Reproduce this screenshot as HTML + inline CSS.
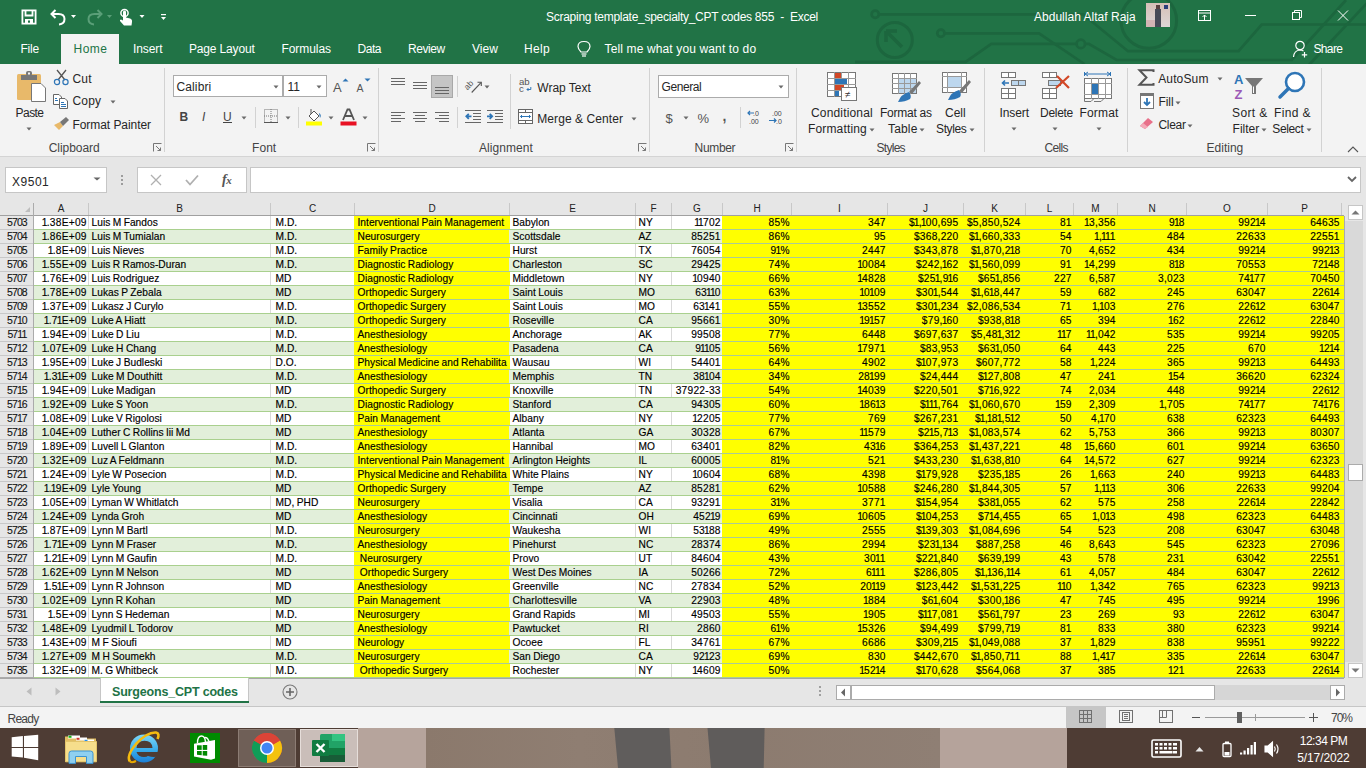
<!DOCTYPE html>
<html><head><meta charset="utf-8"><title>Excel</title>
<style>
html,body{margin:0;padding:0;width:1366px;height:768px;overflow:hidden;background:#fff;}
body{position:relative;font-family:"Liberation Sans", sans-serif;}
.t{position:absolute;white-space:pre;line-height:1;}
.r{position:absolute;}
.s{position:absolute;overflow:visible;}
.n{color:#000;letter-spacing:0.25px;-webkit-text-stroke:0.15px #000;}
.o{margin-left:-1px;letter-spacing:-0.75px;}
</style></head><body>
<div class="r" style="left:0px;top:0px;width:1366px;height:64px;background:#217346;"></div><svg class="s" style="left:0px;top:0px;" width="1366" height="64" viewBox="0 0 1366 64">
<g fill="none" stroke="#1c663e" stroke-width="2.7">
<circle cx="875.2" cy="14.3" r="3.6"/><path d="M878.8 14.3 L1083 14.3 L1128 51.2 L1238.5 51.2 L1261.7 24.5 L1366 24.5"/>
<circle cx="894.8" cy="40" r="17.5" stroke-width="3"/>
<path d="M887 32 L902 47 M886 31 V42 M886 31 H897" stroke-width="3.5"/>
<circle cx="940.9" cy="33.3" r="3.6"/><path d="M944.5 33.3 L1039 33.3 L1084.4 64"/>
<path d="M855 61.9 L965.6 61.9 L991.3 43.9 L1076 43.9"/><circle cx="1080.8" cy="43.9" r="4.2"/><path d="M1085 43.9 L1088.8 43.9 L1116.6 60 L1291.7 60 L1346 0"/>
<circle cx="1148.8" cy="20.5" r="27.8" stroke-width="3"/>
<path d="M1308 66 L1368 2"/>
</g></svg><svg class="s" style="left:20px;top:8px;" width="150" height="20" viewBox="0 0 150 20">
<g fill="none" stroke="#fff" stroke-width="1.8">
<rect x="2.4" y="2.4" width="13.2" height="13.2"/><path d="M5.5 2.5 V7.5 H12.5 V2.5"/>
</g>
<path d="M5 11 H13 V15 H10 V12.5 H8 V15 H5 Z" fill="#fff"/>
<g fill="none" stroke="#fff" stroke-width="2">
<path d="M32.5 6 L38.5 6 Q44.5 6 44.5 11 Q44.5 16 39 16.5" /><path d="M35.5 2 L31.5 6 L35.5 10"/>
</g>
<path d="M51 7 L56 7 L53.5 10 Z" fill="#fff"/>
<g fill="none" stroke="#5a9f78" stroke-width="2">
<path d="M80.5 6 L74.5 6 Q68.5 6 68.5 11 Q68.5 16 74 16.5"/><path d="M77.5 2 L81.5 6 L77.5 10"/>
</g>
<path d="M87 7 L92 7 L89.5 10 Z" fill="#5a9f78"/>
<circle cx="104.5" cy="5" r="3.6" fill="none" stroke="#fff" stroke-width="1.5"/>
<path d="M103 4 Q103 2.5 104.5 2.5 Q106 2.5 106 4 V9.5 L110 10.5 Q112.5 11.5 112 14 L111.5 17.5 H104 L100 13 Q99.5 11.5 101 11.5 L103 12.5 Z" fill="#fff"/>
<path d="M119.5 7 L124.5 7 L122 10 Z" fill="#fff"/>
<rect x="141" y="6" width="5" height="1.2" fill="#fff"/><path d="M141 9 L146 9 L143.5 12 Z" fill="#fff"/>
</svg><div class="t" style="left:546px;top:10.84px;font-size:12px;color:#fff;letter-spacing:-0.273px;">Scraping template_specialty_CPT codes 855  -  Excel</div><div class="t" style="left:1034px;top:10.84px;font-size:12px;color:#fff;letter-spacing:0.016px;">Abdullah Altaf Raja</div><div class="r" style="left:1146px;top:3px;width:24px;height:24px;background:linear-gradient(180deg,#d6bfb6 0%,#d9ccc8 55%,#ddd6d6 100%)"></div><div class="r" style="left:1146px;top:20px;width:9px;height:7px;background:#d4b4b4;"></div><div class="r" style="left:1155px;top:9px;width:6px;height:18px;background:#474a57;"></div><div class="r" style="left:1156px;top:5px;width:4px;height:4px;background:#5a4040;"></div><div class="r" style="left:1164px;top:5px;width:4px;height:4px;background:#2c3f7a;"></div><svg class="s" style="left:1196px;top:8px;" width="160" height="16" viewBox="0 0 160 16">
<g fill="none" stroke="#fff" stroke-width="1">
<rect x="2.5" y="2.5" width="12" height="10"/><line x1="2.5" y1="5" x2="14.5" y2="5"/><path d="M8.5 12 V7 M6.5 9 L8.5 7 L10.5 9"/>
<line x1="49" y1="7.5" x2="60" y2="7.5"/>
<rect x="96.5" y="4.5" width="7" height="7"/><path d="M98.5 4.5 V2.5 H105.5 V9.5 H103.5"/>
<path d="M142 2.5 L152 12.5 M152 2.5 L142 12.5"/>
</g></svg><div class="r" style="left:61px;top:34px;width:58px;height:30px;background:#F3F3F3;"></div><div class="t" style="left:20.5px;top:42.84px;font-size:12px;color:#fff;letter-spacing:-0.248px;">File</div><div class="t" style="left:73.5px;top:42.84px;font-size:12px;color:#217346;letter-spacing:0.495px;">Home</div><div class="t" style="left:133px;top:42.84px;font-size:12px;color:#fff;letter-spacing:-0.083px;">Insert</div><div class="t" style="left:189px;top:42.84px;font-size:12px;color:#fff;letter-spacing:-0.159px;">Page Layout</div><div class="t" style="left:281.5px;top:42.84px;font-size:12px;color:#fff;letter-spacing:-0.074px;">Formulas</div><div class="t" style="left:357.5px;top:42.84px;font-size:12px;color:#fff;letter-spacing:-0.453px;">Data</div><div class="t" style="left:408px;top:42.84px;font-size:12px;color:#fff;letter-spacing:-0.412px;">Review</div><div class="t" style="left:472px;top:42.84px;font-size:12px;color:#fff;letter-spacing:0.001px;">View</div><div class="t" style="left:524px;top:42.84px;font-size:12px;color:#fff;letter-spacing:0.304px;">Help</div><svg class="s" style="left:576px;top:40px;" width="18" height="18" viewBox="0 0 18 18"><g fill="none" stroke="#fff" stroke-width="1.2"><path d="M5 12 Q2 9 2 6.5 Q2 1.5 8 1.5 Q14 1.5 14 6.5 Q14 9 11 12 Z"/><line x1="5.5" y1="14" x2="10.5" y2="14"/><line x1="6" y1="16" x2="10" y2="16"/></g></svg><div class="t" style="left:604.5px;top:42.84px;font-size:12px;color:#fff;letter-spacing:0.135px;">Tell me what you want to do</div><svg class="s" style="left:1292px;top:40px;" width="18" height="18" viewBox="0 0 18 18"><g fill="none" stroke="#fff" stroke-width="1.2"><circle cx="8" cy="5.5" r="4.2"/><path d="M1.5 17 Q2 10.5 8 10 Q10 10 11.5 11"/><path d="M12.5 12 V17.5 M9.8 14.8 H15.2"/></g></svg><div class="t" style="left:1313.5px;top:43.04px;font-size:12px;color:#fff;letter-spacing:-0.658px;">Share</div><div class="r" style="left:0px;top:64px;width:1366px;height:92px;background:#F3F3F3;"></div><div class="r" style="left:0px;top:156px;width:1366px;height:1px;background:#D4D4D4;"></div><div class="r" style="left:164px;top:68px;width:1px;height:84px;background:#D2D2D2;"></div><div class="r" style="left:378px;top:68px;width:1px;height:84px;background:#D2D2D2;"></div><div class="r" style="left:649px;top:68px;width:1px;height:84px;background:#D2D2D2;"></div><div class="r" style="left:796px;top:68px;width:1px;height:84px;background:#D2D2D2;"></div><div class="r" style="left:984px;top:68px;width:1px;height:84px;background:#D2D2D2;"></div><div class="r" style="left:1127px;top:68px;width:1px;height:84px;background:#D2D2D2;"></div><div class="r" style="left:1321px;top:68px;width:1px;height:84px;background:#D2D2D2;"></div><div class="t" style="left:48.75px;top:142.44px;font-size:12px;color:#444444;letter-spacing:-0.047px;">Clipboard</div><div class="t" style="left:252px;top:142.44px;font-size:12px;color:#444444;letter-spacing:0.061px;">Font</div><div class="t" style="left:479px;top:142.44px;font-size:12px;color:#444444;letter-spacing:0.053px;">Alignment</div><div class="t" style="left:694.6px;top:142.44px;font-size:12px;color:#444444;letter-spacing:-0.338px;">Number</div><div class="t" style="left:876.5px;top:142.44px;font-size:12px;color:#444444;letter-spacing:-0.717px;">Styles</div><div class="t" style="left:1044.4px;top:142.44px;font-size:12px;color:#444444;letter-spacing:-0.643px;">Cells</div><div class="t" style="left:1206.5px;top:142.44px;font-size:12px;color:#444444;letter-spacing:0.016px;">Editing</div><svg class="s" style="left:153px;top:143px;" width="9" height="9" viewBox="0 0 9 9"><g fill="none" stroke="#777" stroke-width="1"><path d="M0.5 8.5 V0.5 H8.5"/><path d="M3 3 L7.5 7.5 M4.5 7.5 H7.5 V4.5"/></g></svg><svg class="s" style="left:367px;top:143px;" width="9" height="9" viewBox="0 0 9 9"><g fill="none" stroke="#777" stroke-width="1"><path d="M0.5 8.5 V0.5 H8.5"/><path d="M3 3 L7.5 7.5 M4.5 7.5 H7.5 V4.5"/></g></svg><svg class="s" style="left:638px;top:143px;" width="9" height="9" viewBox="0 0 9 9"><g fill="none" stroke="#777" stroke-width="1"><path d="M0.5 8.5 V0.5 H8.5"/><path d="M3 3 L7.5 7.5 M4.5 7.5 H7.5 V4.5"/></g></svg><svg class="s" style="left:785px;top:143px;" width="9" height="9" viewBox="0 0 9 9"><g fill="none" stroke="#777" stroke-width="1"><path d="M0.5 8.5 V0.5 H8.5"/><path d="M3 3 L7.5 7.5 M4.5 7.5 H7.5 V4.5"/></g></svg><svg class="s" style="left:15px;top:68px;" width="32" height="36" viewBox="0 0 32 36">
<rect x="2" y="6" width="24" height="26" rx="1.5" fill="#E8B96A"/>
<path d="M6 7 H22 V12 H6 Z" fill="#777"/><rect x="11" y="3" width="6" height="5" rx="2" fill="#777"/><rect x="13" y="4.5" width="2" height="2" fill="#F3F3F3"/>
<path d="M16.5 15.5 H26 L30.5 20 V33.5 H16.5 Z" fill="#fff" stroke="#777" stroke-width="1"/>
</svg><div class="t" style="left:15.6px;top:106.84px;font-size:12px;color:#262626;letter-spacing:-0.572px;">Paste</div><svg class="s" style="left:25.5px;top:127px" width="6" height="4" viewBox="0 0 6 4"><path d="M0.5 0.5 L5.5 0.5 L3.0 3.5 Z" fill="#6a6a6a"/></svg><svg class="s" style="left:53px;top:69px;" width="17" height="17" viewBox="0 0 17 17"><g fill="none" stroke="#555" stroke-width="1.3"><path d="M4 1 L12 11 M13 1 L5 11"/></g><g fill="none" stroke="#2E75B6" stroke-width="1.2"><circle cx="4" cy="13" r="2.6"/><circle cx="12.5" cy="13" r="2.6"/></g></svg><div class="t" style="left:72.5px;top:73.34px;font-size:12px;color:#262626;letter-spacing:0.206px;">Cut</div><svg class="s" style="left:52px;top:93px;" width="17" height="16" viewBox="0 0 17 16"><g fill="#fff" stroke="#666" stroke-width="1"><path d="M1.5 1.5 H7 L9.5 4 V11.5 H1.5 Z"/><path d="M7.5 5.5 H13 L15.5 8 V15.5 H7.5 Z"/></g><g stroke="#2E75B6" stroke-width="1"><line x1="3" y1="5.5" x2="5" y2="5.5"/><line x1="3" y1="7.5" x2="6" y2="7.5"/><line x1="9" y1="9.5" x2="12" y2="9.5"/><line x1="9" y1="11.5" x2="14" y2="11.5"/><line x1="9" y1="13.5" x2="14" y2="13.5"/></g></svg><div class="t" style="left:72.5px;top:95.34px;font-size:12px;color:#262626;letter-spacing:0.161px;">Copy</div><svg class="s" style="left:109.5px;top:100px" width="6" height="4" viewBox="0 0 6 4"><path d="M0.5 0.5 L5.5 0.5 L3.0 3.5 Z" fill="#6a6a6a"/></svg><svg class="s" style="left:53px;top:116px;" width="17" height="15" viewBox="0 0 17 15"><path d="M1 9 L7 6 L10 10 L6 14 Z" fill="#E8B96A"/><path d="M7 6 L13 1 L16 4 L10 10 Z" fill="#777"/></svg><div class="t" style="left:72.5px;top:119.34px;font-size:12px;color:#262626;letter-spacing:-0.12px;letter-spacing:-0.066px;">Format Painter</div><div class="r" style="left:173px;top:75px;width:110px;height:22px;background:#fff;border:1px solid #ABABAB;box-sizing:border-box"></div><div class="r" style="left:283px;top:75px;width:44px;height:22px;background:#fff;border:1px solid #ABABAB;box-sizing:border-box"></div><div class="t" style="left:176.5px;top:81.34px;font-size:12px;color:#262626;letter-spacing:0.114px;">Calibri</div><div class="t" style="left:287.5px;top:81.34px;font-size:12px;color:#262626;">11</div><svg class="s" style="left:273.0px;top:85px" width="6" height="4" viewBox="0 0 6 4"><path d="M0.5 0.5 L5.5 0.5 L3.0 3.5 Z" fill="#6a6a6a"/></svg><svg class="s" style="left:316.0px;top:85px" width="6" height="4" viewBox="0 0 6 4"><path d="M0.5 0.5 L5.5 0.5 L3.0 3.5 Z" fill="#6a6a6a"/></svg><div class="t" style="left:333px;top:81.00px;font-size:13px;color:#555;">A</div><svg class="s" style="left:342px;top:78px;" width="7" height="4" viewBox="0 0 7 4"><path d="M0.5 3.5 L3.5 0.5 L6.5 3.5 Z" fill="#2E75B6"/></svg><div class="t" style="left:356.5px;top:83.11px;font-size:10.5px;color:#555;">A</div><svg class="s" style="left:364px;top:78px;" width="7" height="4" viewBox="0 0 7 4"><path d="M0.5 0.5 L6.5 0.5 L3.5 3.5 Z" fill="#2E75B6"/></svg><div class="t" style="left:179.5px;top:111.34px;font-size:12px;color:#444;font-weight:bold;">B</div><div class="t" style="left:202px;top:111.34px;font-size:12px;color:#444;font-style:italic;">I</div><div class="t" style="left:223px;top:111.34px;font-size:12px;color:#444;">U</div><div class="r" style="left:223px;top:122px;width:9px;height:1px;background:#444;"></div><svg class="s" style="left:241.0px;top:116px" width="6" height="4" viewBox="0 0 6 4"><path d="M0.5 0.5 L5.5 0.5 L3.0 3.5 Z" fill="#6a6a6a"/></svg><div class="r" style="left:255px;top:107px;width:1px;height:21px;background:#D2D2D2;"></div><svg class="s" style="left:264px;top:109px;" width="14" height="14" viewBox="0 0 14 14"><g fill="none" stroke="#777" stroke-width="1" stroke-dasharray="1 1"><rect x="0.5" y="0.5" width="13" height="13"/><line x1="7" y1="0" x2="7" y2="14"/><line x1="0" y1="7" x2="14" y2="7"/></g><line x1="0" y1="13.5" x2="14" y2="13.5" stroke="#555" stroke-width="1"/></svg><svg class="s" style="left:284.5px;top:116px" width="6" height="4" viewBox="0 0 6 4"><path d="M0.5 0.5 L5.5 0.5 L3.0 3.5 Z" fill="#6a6a6a"/></svg><div class="r" style="left:298px;top:107px;width:1px;height:21px;background:#D2D2D2;"></div><svg class="s" style="left:305px;top:108px;" width="18" height="18" viewBox="0 0 18 18"><path d="M4 8 L9 3 L14 8 L9 13 Z" fill="#fff" stroke="#555" stroke-width="1"/><line x1="6" y1="1" x2="6" y2="6" stroke="#555"/><path d="M14 5 Q17 7 15 10" fill="#2E75B6"/><rect x="1" y="13.5" width="16" height="4" fill="#FFFF00"/></svg><svg class="s" style="left:327.6px;top:116px" width="6" height="4" viewBox="0 0 6 4"><path d="M0.5 0.5 L5.5 0.5 L3.0 3.5 Z" fill="#6a6a6a"/></svg><svg class="s" style="left:340px;top:108px;" width="17" height="18" viewBox="0 0 17 18"><path d="M3 12 L7.5 1.5 H9.5 L14 12 M5 8 H12" fill="none" stroke="#555" stroke-width="1.8"/><rect x="0.5" y="13.5" width="16" height="4" fill="#E81123"/></svg><svg class="s" style="left:361.6px;top:116px" width="6" height="4" viewBox="0 0 6 4"><path d="M0.5 0.5 L5.5 0.5 L3.0 3.5 Z" fill="#6a6a6a"/></svg><div class="r" style="left:431px;top:75px;width:22px;height:23px;background:#C5C5C5;border:1px solid #A8A8A8;box-sizing:border-box;"></div><svg class="s" style="left:391px;top:78px;" width="16" height="10" viewBox="0 0 16 10"><rect x="0" y="0" width="14" height="1" fill="#666"/><rect x="0" y="3" width="14" height="1" fill="#666"/><rect x="0" y="6" width="14" height="1" fill="#666"/></svg><svg class="s" style="left:413px;top:82px;" width="16" height="10" viewBox="0 0 16 10"><rect x="0" y="0" width="14" height="1" fill="#666"/><rect x="0" y="3" width="14" height="1" fill="#666"/><rect x="0" y="6" width="14" height="1" fill="#666"/></svg><svg class="s" style="left:435px;top:87px;" width="16" height="10" viewBox="0 0 16 10"><rect x="0" y="0" width="14" height="1" fill="#666"/><rect x="0" y="3" width="14" height="1" fill="#666"/><rect x="0" y="6" width="14" height="1" fill="#666"/></svg><div class="r" style="left:457px;top:76px;width:1px;height:21px;background:#D2D2D2;"></div><svg class="s" style="left:462px;top:76px;" width="22" height="20" viewBox="0 0 22 20"><text x="0" y="0" font-size="8.5" font-family="Liberation Sans" fill="#555" transform="translate(5.5 14.5) rotate(-48)">ab</text><path d="M9.7 16.5 L19 6.6" fill="none" stroke="#555" stroke-width="1.1"/><path d="M15.5 6.3 L19.3 6.3 L19.3 10" fill="none" stroke="#555" stroke-width="1.1"/></svg><svg class="s" style="left:484.3px;top:85px" width="6" height="4" viewBox="0 0 6 4"><path d="M0.5 0.5 L5.5 0.5 L3.0 3.5 Z" fill="#6a6a6a"/></svg><div class="r" style="left:510px;top:74px;width:1px;height:55px;background:#D2D2D2;"></div><svg class="s" style="left:518px;top:76px;" width="16" height="18" viewBox="0 0 16 18"><text x="1" y="9.3" font-size="9.6" font-family="Liberation Sans" fill="#555">ab</text><text x="1" y="16.4" font-size="9.6" font-family="Liberation Sans" fill="#555">c</text><path d="M12.8 11 V13.5 H9 M10.5 12 L9 13.5 L10.5 15" fill="none" stroke="#2E75B6" stroke-width="1"/></svg><div class="t" style="left:537.3px;top:81.64px;font-size:12px;color:#262626;letter-spacing:-0.010px;">Wrap Text</div><svg class="s" style="left:391px;top:112px;" width="16" height="13" viewBox="0 0 16 13"><rect x="0" y="0" width="14" height="1" fill="#666"/><rect x="0" y="3" width="10" height="1" fill="#666"/><rect x="0" y="6" width="14" height="1" fill="#666"/><rect x="0" y="9" width="10" height="1" fill="#666"/></svg><svg class="s" style="left:413px;top:112px;" width="16" height="13" viewBox="0 0 16 13"><rect x="0" y="0" width="14" height="1" fill="#666"/><rect x="2" y="3" width="10" height="1" fill="#666"/><rect x="0" y="6" width="14" height="1" fill="#666"/><rect x="2" y="9" width="10" height="1" fill="#666"/></svg><svg class="s" style="left:435px;top:112px;" width="16" height="13" viewBox="0 0 16 13"><rect x="0" y="0" width="14" height="1" fill="#666"/><rect x="4" y="3" width="10" height="1" fill="#666"/><rect x="0" y="6" width="14" height="1" fill="#666"/><rect x="4" y="9" width="10" height="1" fill="#666"/></svg><div class="r" style="left:457px;top:107px;width:1px;height:21px;background:#D2D2D2;"></div><svg class="s" style="left:465px;top:110px;" width="17" height="14" viewBox="0 0 17 14"><g fill="#666"><rect x="0" y="0" width="16" height="1"/><rect x="8" y="3" width="8" height="1"/><rect x="8" y="6" width="8" height="1"/><rect x="8" y="9" width="8" height="1"/><rect x="0" y="12" width="16" height="1"/></g><path d="M6.5 6.3 H1.5 M3.8 3.8 L1.3 6.3 L3.8 8.8" fill="none" stroke="#2E75B6" stroke-width="1.8"/></svg><svg class="s" style="left:487px;top:110px;" width="17" height="14" viewBox="0 0 17 14"><g fill="#666"><rect x="0" y="0" width="16" height="1"/><rect x="8" y="3" width="8" height="1"/><rect x="8" y="6" width="8" height="1"/><rect x="8" y="9" width="8" height="1"/><rect x="0" y="12" width="16" height="1"/></g><path d="M0 6.3 H5 M2.7 3.8 L5.2 6.3 L2.7 8.8" fill="none" stroke="#2E75B6" stroke-width="1.8"/></svg><svg class="s" style="left:518px;top:109px;" width="16" height="16" viewBox="0 0 16 16"><rect x="0.5" y="0.5" width="14" height="14" fill="#fff" stroke="#666"/><g stroke="#666"><line x1="0" y1="3.5" x2="15" y2="3.5"/><line x1="0" y1="11.5" x2="15" y2="11.5"/><line x1="7.5" y1="0" x2="7.5" y2="3.5"/><line x1="7.5" y1="11.5" x2="7.5" y2="15"/></g><path d="M2.5 7.5 H12.5 M4 6 L2.5 7.5 L4 9 M11 6 L12.5 7.5 L11 9" fill="none" stroke="#2E75B6"/></svg><div class="t" style="left:537.3px;top:112.74px;font-size:12px;color:#262626;letter-spacing:0.077px;">Merge &amp; Center</div><svg class="s" style="left:631.3px;top:117px" width="6" height="4" viewBox="0 0 6 4"><path d="M0.5 0.5 L5.5 0.5 L3.0 3.5 Z" fill="#6a6a6a"/></svg><div class="r" style="left:658px;top:75px;width:131px;height:23px;background:#fff;border:1px solid #ABABAB;box-sizing:border-box"></div><div class="t" style="left:661.6px;top:81.34px;font-size:12px;color:#262626;letter-spacing:-0.451px;">General</div><svg class="s" style="left:778.0px;top:85px" width="6" height="4" viewBox="0 0 6 4"><path d="M0.5 0.5 L5.5 0.5 L3.0 3.5 Z" fill="#6a6a6a"/></svg><div class="t" style="left:665.5px;top:112.00px;font-size:13px;color:#555;">$</div><svg class="s" style="left:682.6px;top:116px" width="6" height="4" viewBox="0 0 6 4"><path d="M0.5 0.5 L5.5 0.5 L3.0 3.5 Z" fill="#6a6a6a"/></svg><div class="t" style="left:697.5px;top:112.00px;font-size:13px;color:#555;">%</div><div class="t" style="left:722.5px;top:108.65px;font-size:14px;color:#555;font-weight:bold;">,</div><div class="r" style="left:740px;top:107px;width:1px;height:21px;background:#D2D2D2;"></div><svg class="s" style="left:746px;top:110px;" width="18" height="14" viewBox="0 0 18 14"><text x="7" y="6" font-size="7" font-family="Liberation Sans" fill="#444">.0</text><text x="3" y="13.5" font-size="7" font-family="Liberation Sans" fill="#444">.00</text><path d="M8 3 H2 M4 1 L2 3 L4 5" fill="none" stroke="#2E75B6" stroke-width="1.2"/></svg><svg class="s" style="left:768px;top:110px;" width="18" height="14" viewBox="0 0 18 14"><text x="4" y="6" font-size="7" font-family="Liberation Sans" fill="#444">.00</text><text x="8" y="13.5" font-size="7" font-family="Liberation Sans" fill="#444">.0</text><path d="M1 10.5 H8 M6 8.5 L8 10.5 L6 12.5" fill="none" stroke="#2E75B6" stroke-width="1.2"/></svg><svg class="s" style="left:826px;top:71px;" width="32" height="32" viewBox="0 0 32 32">
<g fill="#fff" stroke="#777" stroke-width="1"><rect x="1.5" y="1.5" width="28" height="24"/></g>
<g stroke="#999" stroke-width="1"><line x1="1" y1="7.5" x2="30" y2="7.5"/><line x1="1" y1="13.5" x2="30" y2="13.5"/><line x1="1" y1="19.5" x2="30" y2="19.5"/><line x1="8.5" y1="1" x2="8.5" y2="26"/><line x1="15.5" y1="1" x2="15.5" y2="26"/><line x1="22.5" y1="1" x2="22.5" y2="26"/></g>
<rect x="9" y="2" width="6" height="5" fill="#D24726"/><rect x="9" y="8" width="12" height="5" fill="#2E75B6"/><rect x="9" y="14" width="9" height="5" fill="#D24726"/><rect x="9" y="20" width="4" height="5" fill="#2E75B6"/>
<rect x="15.5" y="16.5" width="15" height="13" fill="#fff" stroke="#777"/>
<text x="19" y="27" font-size="10" font-family="Liberation Sans" fill="#333">≠</text>
</svg><div class="t" style="left:811px;top:107.14px;font-size:12px;color:#262626;letter-spacing:0.165px;">Conditional</div><div class="t" style="left:808px;top:123.34px;font-size:12px;color:#262626;letter-spacing:0.149px;">Formatting</div><svg class="s" style="left:868.5px;top:128px" width="6" height="4" viewBox="0 0 6 4"><path d="M0.5 0.5 L5.5 0.5 L3.0 3.5 Z" fill="#6a6a6a"/></svg><svg class="s" style="left:891px;top:72px;" width="32" height="31" viewBox="0 0 32 31">
<rect x="1.5" y="1.5" width="24" height="20" fill="#fff" stroke="#777"/>
<rect x="7" y="6" width="18" height="15" fill="#BDD7EE"/>
<g stroke="#999"><line x1="1" y1="6.5" x2="26" y2="6.5"/><line x1="1" y1="11.5" x2="26" y2="11.5"/><line x1="1" y1="16.5" x2="26" y2="16.5"/><line x1="7.5" y1="1" x2="7.5" y2="22"/><line x1="13.5" y1="1" x2="13.5" y2="22"/><line x1="19.5" y1="1" x2="19.5" y2="22"/></g>
<path d="M18 20 L28 9 L30 11 L21 22 Z" fill="#777"/><path d="M7 30 Q10 22 18 20 Q21 24 19 27 Q14 30 7 30 Z" fill="#2E75B6"/>
</svg><div class="t" style="left:880px;top:107.14px;font-size:12px;color:#262626;letter-spacing:-0.252px;">Format as</div><div class="t" style="left:888px;top:123.34px;font-size:12px;color:#262626;letter-spacing:0.153px;">Table</div><svg class="s" style="left:919.0px;top:128px" width="6" height="4" viewBox="0 0 6 4"><path d="M0.5 0.5 L5.5 0.5 L3.0 3.5 Z" fill="#6a6a6a"/></svg><svg class="s" style="left:941px;top:71px;" width="32" height="31" viewBox="0 0 32 31">
<rect x="1.5" y="1.5" width="24" height="20" fill="#fff" stroke="#777"/>
<rect x="6" y="5" width="15" height="11" fill="#BDD7EE"/>
<g stroke="#999"><line x1="1" y1="5.5" x2="26" y2="5.5"/><line x1="1" y1="16.5" x2="26" y2="16.5"/><line x1="6.5" y1="1" x2="6.5" y2="22"/><line x1="20.5" y1="1" x2="20.5" y2="22"/></g>
<path d="M18 20 L28 9 L30 11 L21 22 Z" fill="#777"/><path d="M7 29 Q10 21 18 19 Q21 23 19 26 Q14 29 7 29 Z" fill="#2E75B6"/>
</svg><div class="t" style="left:945px;top:107.14px;font-size:12px;color:#262626;letter-spacing:-0.024px;">Cell</div><div class="t" style="left:936px;top:123.34px;font-size:12px;color:#262626;letter-spacing:-0.377px;">Styles</div><svg class="s" style="left:969.0px;top:128px" width="6" height="4" viewBox="0 0 6 4"><path d="M0.5 0.5 L5.5 0.5 L3.0 3.5 Z" fill="#6a6a6a"/></svg><svg class="s" style="left:999px;top:71px;" width="30" height="29" viewBox="0 0 30 29">
<g fill="#fff" stroke="#777" stroke-width="1"><rect x="2.5" y="1.5" width="14" height="5"/><line x1="9.5" y1="1.5" x2="9.5" y2="6.5"/>
<rect x="2.5" y="17.5" width="14" height="10"/><line x1="9.5" y1="17.5" x2="9.5" y2="27.5"/><line x1="2.5" y1="22.5" x2="16.5" y2="22.5"/></g>
<rect x="12.5" y="9.5" width="14" height="5" fill="#BDD7EE" stroke="#777"/><line x1="19.5" y1="9.5" x2="19.5" y2="14.5" stroke="#777"/>
<path d="M10 12 H3.5 M6 9.5 L3.5 12 L6 14.5" fill="none" stroke="#2E75B6" stroke-width="1.6"/>
</svg><div class="t" style="left:999.5px;top:107.09px;font-size:12px;color:#262626;letter-spacing:-0.103px;">Insert</div><svg class="s" style="left:1010.5px;top:127px" width="6" height="4" viewBox="0 0 6 4"><path d="M0.5 0.5 L5.5 0.5 L3.0 3.5 Z" fill="#6a6a6a"/></svg><svg class="s" style="left:1041px;top:71px;" width="32" height="29" viewBox="0 0 32 29">
<g fill="#fff" stroke="#777" stroke-width="1"><rect x="1.5" y="1.5" width="14" height="5"/><line x1="8.5" y1="1.5" x2="8.5" y2="6.5"/>
<rect x="1.5" y="17.5" width="14" height="10"/><line x1="8.5" y1="17.5" x2="8.5" y2="27.5"/><line x1="1.5" y1="22.5" x2="15.5" y2="22.5"/></g>
<rect x="7.5" y="9.5" width="12" height="5" fill="#BDD7EE" stroke="#777"/>
<path d="M15 17 L28 5 M16 5 L28 17" fill="none" stroke="#D24726" stroke-width="2.2"/>
</svg><div class="t" style="left:1040px;top:107.09px;font-size:12px;color:#262626;letter-spacing:-0.287px;">Delete</div><svg class="s" style="left:1052.4px;top:127px" width="6" height="4" viewBox="0 0 6 4"><path d="M0.5 0.5 L5.5 0.5 L3.0 3.5 Z" fill="#6a6a6a"/></svg><svg class="s" style="left:1083px;top:70px;" width="30" height="32" viewBox="0 0 30 32">
<path d="M1.5 2 V6 M27.5 2 V6 M2 4 H27 M5 2 L2 4 L5 6 M24 2 L27 4 L24 6" fill="none" stroke="#2E75B6" stroke-width="1"/>
<rect x="1.5" y="8.5" width="27" height="20" fill="#fff" stroke="#777"/>
<g stroke="#999"><line x1="1" y1="13.5" x2="29" y2="13.5"/><line x1="1" y1="24.5" x2="29" y2="24.5"/><line x1="8.5" y1="8" x2="8.5" y2="29"/><line x1="15.5" y1="8" x2="15.5" y2="29"/><line x1="22.5" y1="8" x2="22.5" y2="29"/></g>
<rect x="9" y="14" width="6" height="10" fill="#2E75B6"/>
<path d="M1.5 28.5 V31.5 H8 L11 28.5 M11 31.5 H18 L21 28.5" fill="none" stroke="#777"/>
</svg><div class="t" style="left:1079.5px;top:107.09px;font-size:12px;color:#262626;letter-spacing:0.167px;">Format</div><svg class="s" style="left:1095.5px;top:127px" width="6" height="4" viewBox="0 0 6 4"><path d="M0.5 0.5 L5.5 0.5 L3.0 3.5 Z" fill="#6a6a6a"/></svg><svg class="s" style="left:1138px;top:69px;" width="17" height="17" viewBox="0 0 17 17"><path d="M15.5 3 V1.2 H1.5 L8.5 8.5 L1.5 15.8 H15.5 V14" fill="none" stroke="#555" stroke-width="2" stroke-linejoin="miter"/></svg><div class="t" style="left:1158.2px;top:72.84px;font-size:12px;color:#262626;letter-spacing:0.140px;">AutoSum</div><svg class="s" style="left:1217.3px;top:77px" width="6" height="4" viewBox="0 0 6 4"><path d="M0.5 0.5 L5.5 0.5 L3.0 3.5 Z" fill="#6a6a6a"/></svg><svg class="s" style="left:1139px;top:92px;" width="16" height="17" viewBox="0 0 16 17"><rect x="1.5" y="1.5" width="13" height="15" fill="#fff" stroke="#777"/><rect x="1" y="1" width="14" height="3" fill="#777"/><path d="M8 6 V13 M5 10 L8 13 L11 10" fill="none" stroke="#2E75B6" stroke-width="1.8"/></svg><div class="t" style="left:1158.5px;top:96.34px;font-size:12px;color:#262626;letter-spacing:-0.076px;">Fill</div><svg class="s" style="left:1175.0px;top:101px" width="6" height="4" viewBox="0 0 6 4"><path d="M0.5 0.5 L5.5 0.5 L3.0 3.5 Z" fill="#6a6a6a"/></svg><svg class="s" style="left:1139px;top:116px;" width="16" height="14" viewBox="0 0 16 14"><path d="M1 10 L9 2 L14 6 L6 13 Z" fill="#E8708A"/><path d="M1 10 L4 7 L9 11 L6 13 Z" fill="#F4A9B8"/></svg><div class="t" style="left:1158.5px;top:119.34px;font-size:12px;color:#262626;letter-spacing:-0.297px;">Clear</div><svg class="s" style="left:1187.3px;top:124px" width="6" height="4" viewBox="0 0 6 4"><path d="M0.5 0.5 L5.5 0.5 L3.0 3.5 Z" fill="#6a6a6a"/></svg><svg class="s" style="left:1233px;top:72px;" width="32" height="29" viewBox="0 0 32 29"><text x="1" y="12" font-size="13" font-family="Liberation Sans" font-weight="bold" fill="#2E75B6">A</text><text x="1.5" y="27" font-size="13" font-family="Liberation Sans" font-weight="bold" fill="#9B59B6">Z</text><path d="M12 6 H30 L23 14 V22 H19 V14 Z" fill="#777"/><path d="M20.5 14.5 V21" stroke="#fff" stroke-width="1"/></svg><div class="t" style="left:1232px;top:107.34px;font-size:12px;color:#262626;letter-spacing:0.388px;">Sort &amp;</div><div class="t" style="left:1232.6px;top:123.14px;font-size:12px;color:#262626;letter-spacing:-0.014px;">Filter</div><svg class="s" style="left:1260.5px;top:128px" width="6" height="4" viewBox="0 0 6 4"><path d="M0.5 0.5 L5.5 0.5 L3.0 3.5 Z" fill="#6a6a6a"/></svg><svg class="s" style="left:1277px;top:71px;" width="30" height="29" viewBox="0 0 30 29"><circle cx="18" cy="11" r="9" fill="#fff" stroke="#2E75B6" stroke-width="2.6"/><path d="M11.5 17.5 L3 26" stroke="#2E75B6" stroke-width="3.5" stroke-linecap="round"/></svg><div class="t" style="left:1274px;top:107.34px;font-size:12px;color:#262626;letter-spacing:0.342px;">Find &amp;</div><div class="t" style="left:1272.3px;top:123.14px;font-size:12px;color:#262626;letter-spacing:-0.372px;">Select</div><svg class="s" style="left:1305.5px;top:128px" width="6" height="4" viewBox="0 0 6 4"><path d="M0.5 0.5 L5.5 0.5 L3.0 3.5 Z" fill="#6a6a6a"/></svg><svg class="s" style="left:1347px;top:146px;" width="12" height="7" viewBox="0 0 12 7"><path d="M1 6 L6 1 L11 6" fill="none" stroke="#555" stroke-width="1.1"/></svg><div class="r" style="left:0px;top:157px;width:1366px;height:46px;background:#E6E6E6;"></div><div class="r" style="left:5px;top:167px;width:102px;height:26px;background:#fff;border:1px solid #C6C6C6;box-sizing:border-box"></div><div class="t" style="left:12px;top:175.54px;font-size:12px;color:#262626;letter-spacing:0.524px;">X9501</div><svg class="s" style="left:92.5px;top:177px" width="8" height="4" viewBox="0 0 8 4"><path d="M0.5 0.5 L7.5 0.5 L4.0 3.5 Z" fill="#666"/></svg><div class="r" style="left:121px;top:175px;width:2px;height:2px;background:#9C9C9C;"></div><div class="r" style="left:121px;top:179px;width:2px;height:2px;background:#9C9C9C;"></div><div class="r" style="left:121px;top:183px;width:2px;height:2px;background:#9C9C9C;"></div><div class="r" style="left:137px;top:167px;width:110px;height:26px;background:#fff;border:1px solid #C6C6C6;box-sizing:border-box"></div><svg class="s" style="left:150px;top:174px;" width="12" height="12" viewBox="0 0 12 12"><path d="M1 1 L11 11 M11 1 L1 11" stroke="#B0B0B0" stroke-width="1.3"/></svg><svg class="s" style="left:185px;top:174px;" width="14" height="12" viewBox="0 0 14 12"><path d="M1 6 L5 10.5 L13 1.5" fill="none" stroke="#B0B0B0" stroke-width="1.8"/></svg><div class="t" style="left:222px;top:173px;font-family:'Liberation Serif';font-style:italic;font-weight:bold;font-size:14px;color:#555;line-height:1;letter-spacing:-0.5px">f<span style="font-size:11px">x</span></div><div class="r" style="left:250px;top:167px;width:1111px;height:26px;background:#fff;border:1px solid #C6C6C6;box-sizing:border-box"></div><svg class="s" style="left:1347px;top:176px;" width="10" height="7" viewBox="0 0 10 7"><path d="M1 1 L5 5 L9 1" fill="none" stroke="#666" stroke-width="1.8"/></svg><div class="r" style="left:0px;top:203px;width:1344px;height:13px;background:#E6E6E6;"></div><div class="r" style="left:0px;top:216px;width:33px;height:462px;background:#E6E6E6;"></div><svg class="s" style="left:25px;top:207px;" width="5" height="5" viewBox="0 0 5 5"><path d="M5 0 L5 5 L0 5 Z" fill="#BDBDBD"/></svg><div class="r" style="left:34px;top:216px;width:1310px;height:462px;background:#fff;"></div><div class="r" style="left:88px;top:216px;width:1px;height:462px;background:#D9D9D9;"></div><div class="r" style="left:270px;top:216px;width:1px;height:462px;background:#D9D9D9;"></div><div class="r" style="left:354px;top:216px;width:1px;height:462px;background:#D9D9D9;"></div><div class="r" style="left:509px;top:216px;width:1px;height:462px;background:#D9D9D9;"></div><div class="r" style="left:635px;top:216px;width:1px;height:462px;background:#D9D9D9;"></div><div class="r" style="left:671px;top:216px;width:1px;height:462px;background:#D9D9D9;"></div><div class="r" style="left:722px;top:216px;width:1px;height:462px;background:#D9D9D9;"></div><div class="r" style="left:791px;top:216px;width:1px;height:462px;background:#D9D9D9;"></div><div class="r" style="left:887px;top:216px;width:1px;height:462px;background:#D9D9D9;"></div><div class="r" style="left:963px;top:216px;width:1px;height:462px;background:#D9D9D9;"></div><div class="r" style="left:1025px;top:216px;width:1px;height:462px;background:#D9D9D9;"></div><div class="r" style="left:1073px;top:216px;width:1px;height:462px;background:#D9D9D9;"></div><div class="r" style="left:1117px;top:216px;width:1px;height:462px;background:#D9D9D9;"></div><div class="r" style="left:1186px;top:216px;width:1px;height:462px;background:#D9D9D9;"></div><div class="r" style="left:1267px;top:216px;width:1px;height:462px;background:#D9D9D9;"></div><div class="r" style="left:1341px;top:216px;width:1px;height:462px;background:#D9D9D9;"></div><div class="r" style="left:34px;top:230px;width:1310px;height:13px;background:#E2EFDA;"></div><div class="r" style="left:34px;top:258px;width:1310px;height:13px;background:#E2EFDA;"></div><div class="r" style="left:34px;top:286px;width:1310px;height:13px;background:#E2EFDA;"></div><div class="r" style="left:34px;top:314px;width:1310px;height:13px;background:#E2EFDA;"></div><div class="r" style="left:34px;top:342px;width:1310px;height:13px;background:#E2EFDA;"></div><div class="r" style="left:34px;top:370px;width:1310px;height:13px;background:#E2EFDA;"></div><div class="r" style="left:34px;top:398px;width:1310px;height:13px;background:#E2EFDA;"></div><div class="r" style="left:34px;top:426px;width:1310px;height:13px;background:#E2EFDA;"></div><div class="r" style="left:34px;top:454px;width:1310px;height:13px;background:#E2EFDA;"></div><div class="r" style="left:34px;top:482px;width:1310px;height:13px;background:#E2EFDA;"></div><div class="r" style="left:34px;top:510px;width:1310px;height:13px;background:#E2EFDA;"></div><div class="r" style="left:34px;top:538px;width:1310px;height:13px;background:#E2EFDA;"></div><div class="r" style="left:34px;top:566px;width:1310px;height:13px;background:#E2EFDA;"></div><div class="r" style="left:34px;top:594px;width:1310px;height:13px;background:#E2EFDA;"></div><div class="r" style="left:34px;top:622px;width:1310px;height:13px;background:#E2EFDA;"></div><div class="r" style="left:34px;top:650px;width:1310px;height:13px;background:#E2EFDA;"></div><div class="r" style="left:354px;top:216px;width:156px;height:13px;background:#FFFF00;"></div><div class="r" style="left:722px;top:216px;width:622px;height:13px;background:#FFFF00;"></div><div class="r" style="left:354px;top:230px;width:155px;height:13px;background:#FFFF00;"></div><div class="r" style="left:722px;top:230px;width:622px;height:13px;background:#FFFF00;"></div><div class="r" style="left:354px;top:244px;width:156px;height:13px;background:#FFFF00;"></div><div class="r" style="left:722px;top:244px;width:622px;height:13px;background:#FFFF00;"></div><div class="r" style="left:354px;top:258px;width:155px;height:13px;background:#FFFF00;"></div><div class="r" style="left:722px;top:258px;width:622px;height:13px;background:#FFFF00;"></div><div class="r" style="left:354px;top:272px;width:156px;height:13px;background:#FFFF00;"></div><div class="r" style="left:722px;top:272px;width:622px;height:13px;background:#FFFF00;"></div><div class="r" style="left:354px;top:286px;width:155px;height:13px;background:#FFFF00;"></div><div class="r" style="left:722px;top:286px;width:622px;height:13px;background:#FFFF00;"></div><div class="r" style="left:354px;top:300px;width:156px;height:13px;background:#FFFF00;"></div><div class="r" style="left:722px;top:300px;width:622px;height:13px;background:#FFFF00;"></div><div class="r" style="left:354px;top:314px;width:155px;height:13px;background:#FFFF00;"></div><div class="r" style="left:722px;top:314px;width:622px;height:13px;background:#FFFF00;"></div><div class="r" style="left:354px;top:328px;width:156px;height:13px;background:#FFFF00;"></div><div class="r" style="left:722px;top:328px;width:622px;height:13px;background:#FFFF00;"></div><div class="r" style="left:354px;top:342px;width:155px;height:13px;background:#FFFF00;"></div><div class="r" style="left:722px;top:342px;width:622px;height:13px;background:#FFFF00;"></div><div class="r" style="left:354px;top:356px;width:156px;height:13px;background:#FFFF00;"></div><div class="r" style="left:722px;top:356px;width:622px;height:13px;background:#FFFF00;"></div><div class="r" style="left:354px;top:370px;width:155px;height:13px;background:#FFFF00;"></div><div class="r" style="left:722px;top:370px;width:622px;height:13px;background:#FFFF00;"></div><div class="r" style="left:354px;top:384px;width:156px;height:13px;background:#FFFF00;"></div><div class="r" style="left:722px;top:384px;width:622px;height:13px;background:#FFFF00;"></div><div class="r" style="left:354px;top:398px;width:155px;height:13px;background:#FFFF00;"></div><div class="r" style="left:722px;top:398px;width:622px;height:13px;background:#FFFF00;"></div><div class="r" style="left:354px;top:412px;width:156px;height:13px;background:#FFFF00;"></div><div class="r" style="left:722px;top:412px;width:622px;height:13px;background:#FFFF00;"></div><div class="r" style="left:354px;top:426px;width:155px;height:13px;background:#FFFF00;"></div><div class="r" style="left:722px;top:426px;width:622px;height:13px;background:#FFFF00;"></div><div class="r" style="left:354px;top:440px;width:156px;height:13px;background:#FFFF00;"></div><div class="r" style="left:722px;top:440px;width:622px;height:13px;background:#FFFF00;"></div><div class="r" style="left:354px;top:454px;width:155px;height:13px;background:#FFFF00;"></div><div class="r" style="left:722px;top:454px;width:622px;height:13px;background:#FFFF00;"></div><div class="r" style="left:354px;top:468px;width:156px;height:13px;background:#FFFF00;"></div><div class="r" style="left:722px;top:468px;width:622px;height:13px;background:#FFFF00;"></div><div class="r" style="left:354px;top:482px;width:155px;height:13px;background:#FFFF00;"></div><div class="r" style="left:722px;top:482px;width:622px;height:13px;background:#FFFF00;"></div><div class="r" style="left:354px;top:496px;width:156px;height:13px;background:#FFFF00;"></div><div class="r" style="left:722px;top:496px;width:622px;height:13px;background:#FFFF00;"></div><div class="r" style="left:354px;top:510px;width:155px;height:13px;background:#FFFF00;"></div><div class="r" style="left:722px;top:510px;width:622px;height:13px;background:#FFFF00;"></div><div class="r" style="left:354px;top:524px;width:156px;height:13px;background:#FFFF00;"></div><div class="r" style="left:722px;top:524px;width:622px;height:13px;background:#FFFF00;"></div><div class="r" style="left:354px;top:538px;width:155px;height:13px;background:#FFFF00;"></div><div class="r" style="left:722px;top:538px;width:622px;height:13px;background:#FFFF00;"></div><div class="r" style="left:354px;top:552px;width:156px;height:13px;background:#FFFF00;"></div><div class="r" style="left:722px;top:552px;width:622px;height:13px;background:#FFFF00;"></div><div class="r" style="left:354px;top:566px;width:155px;height:13px;background:#FFFF00;"></div><div class="r" style="left:722px;top:566px;width:622px;height:13px;background:#FFFF00;"></div><div class="r" style="left:354px;top:580px;width:156px;height:13px;background:#FFFF00;"></div><div class="r" style="left:722px;top:580px;width:622px;height:13px;background:#FFFF00;"></div><div class="r" style="left:354px;top:594px;width:155px;height:13px;background:#FFFF00;"></div><div class="r" style="left:722px;top:594px;width:622px;height:13px;background:#FFFF00;"></div><div class="r" style="left:354px;top:608px;width:156px;height:13px;background:#FFFF00;"></div><div class="r" style="left:722px;top:608px;width:622px;height:13px;background:#FFFF00;"></div><div class="r" style="left:354px;top:622px;width:155px;height:13px;background:#FFFF00;"></div><div class="r" style="left:722px;top:622px;width:622px;height:13px;background:#FFFF00;"></div><div class="r" style="left:354px;top:636px;width:156px;height:13px;background:#FFFF00;"></div><div class="r" style="left:722px;top:636px;width:622px;height:13px;background:#FFFF00;"></div><div class="r" style="left:354px;top:650px;width:155px;height:13px;background:#FFFF00;"></div><div class="r" style="left:722px;top:650px;width:622px;height:13px;background:#FFFF00;"></div><div class="r" style="left:354px;top:664px;width:156px;height:13px;background:#FFFF00;"></div><div class="r" style="left:722px;top:664px;width:622px;height:13px;background:#FFFF00;"></div><div class="r" style="left:34px;top:229px;width:321px;height:1px;background:#A9D08E;"></div><div class="r" style="left:355px;top:229px;width:155px;height:1px;background:#AACB97;"></div><div class="r" style="left:510px;top:229px;width:212px;height:1px;background:#A9D08E;"></div><div class="r" style="left:722px;top:229px;width:622px;height:1px;background:#AACB97;"></div><div class="r" style="left:34px;top:243px;width:321px;height:1px;background:#A9D08E;"></div><div class="r" style="left:355px;top:243px;width:155px;height:1px;background:#AACB97;"></div><div class="r" style="left:510px;top:243px;width:212px;height:1px;background:#A9D08E;"></div><div class="r" style="left:722px;top:243px;width:622px;height:1px;background:#AACB97;"></div><div class="r" style="left:34px;top:257px;width:321px;height:1px;background:#A9D08E;"></div><div class="r" style="left:355px;top:257px;width:155px;height:1px;background:#AACB97;"></div><div class="r" style="left:510px;top:257px;width:212px;height:1px;background:#A9D08E;"></div><div class="r" style="left:722px;top:257px;width:622px;height:1px;background:#AACB97;"></div><div class="r" style="left:34px;top:271px;width:321px;height:1px;background:#A9D08E;"></div><div class="r" style="left:355px;top:271px;width:155px;height:1px;background:#AACB97;"></div><div class="r" style="left:510px;top:271px;width:212px;height:1px;background:#A9D08E;"></div><div class="r" style="left:722px;top:271px;width:622px;height:1px;background:#AACB97;"></div><div class="r" style="left:34px;top:285px;width:321px;height:1px;background:#A9D08E;"></div><div class="r" style="left:355px;top:285px;width:155px;height:1px;background:#AACB97;"></div><div class="r" style="left:510px;top:285px;width:212px;height:1px;background:#A9D08E;"></div><div class="r" style="left:722px;top:285px;width:622px;height:1px;background:#AACB97;"></div><div class="r" style="left:34px;top:299px;width:321px;height:1px;background:#A9D08E;"></div><div class="r" style="left:355px;top:299px;width:155px;height:1px;background:#AACB97;"></div><div class="r" style="left:510px;top:299px;width:212px;height:1px;background:#A9D08E;"></div><div class="r" style="left:722px;top:299px;width:622px;height:1px;background:#AACB97;"></div><div class="r" style="left:34px;top:313px;width:321px;height:1px;background:#A9D08E;"></div><div class="r" style="left:355px;top:313px;width:155px;height:1px;background:#AACB97;"></div><div class="r" style="left:510px;top:313px;width:212px;height:1px;background:#A9D08E;"></div><div class="r" style="left:722px;top:313px;width:622px;height:1px;background:#AACB97;"></div><div class="r" style="left:34px;top:327px;width:321px;height:1px;background:#A9D08E;"></div><div class="r" style="left:355px;top:327px;width:155px;height:1px;background:#AACB97;"></div><div class="r" style="left:510px;top:327px;width:212px;height:1px;background:#A9D08E;"></div><div class="r" style="left:722px;top:327px;width:622px;height:1px;background:#AACB97;"></div><div class="r" style="left:34px;top:341px;width:321px;height:1px;background:#A9D08E;"></div><div class="r" style="left:355px;top:341px;width:155px;height:1px;background:#AACB97;"></div><div class="r" style="left:510px;top:341px;width:212px;height:1px;background:#A9D08E;"></div><div class="r" style="left:722px;top:341px;width:622px;height:1px;background:#AACB97;"></div><div class="r" style="left:34px;top:355px;width:321px;height:1px;background:#A9D08E;"></div><div class="r" style="left:355px;top:355px;width:155px;height:1px;background:#AACB97;"></div><div class="r" style="left:510px;top:355px;width:212px;height:1px;background:#A9D08E;"></div><div class="r" style="left:722px;top:355px;width:622px;height:1px;background:#AACB97;"></div><div class="r" style="left:34px;top:369px;width:321px;height:1px;background:#A9D08E;"></div><div class="r" style="left:355px;top:369px;width:155px;height:1px;background:#AACB97;"></div><div class="r" style="left:510px;top:369px;width:212px;height:1px;background:#A9D08E;"></div><div class="r" style="left:722px;top:369px;width:622px;height:1px;background:#AACB97;"></div><div class="r" style="left:34px;top:383px;width:321px;height:1px;background:#A9D08E;"></div><div class="r" style="left:355px;top:383px;width:155px;height:1px;background:#AACB97;"></div><div class="r" style="left:510px;top:383px;width:212px;height:1px;background:#A9D08E;"></div><div class="r" style="left:722px;top:383px;width:622px;height:1px;background:#AACB97;"></div><div class="r" style="left:34px;top:397px;width:321px;height:1px;background:#A9D08E;"></div><div class="r" style="left:355px;top:397px;width:155px;height:1px;background:#AACB97;"></div><div class="r" style="left:510px;top:397px;width:212px;height:1px;background:#A9D08E;"></div><div class="r" style="left:722px;top:397px;width:622px;height:1px;background:#AACB97;"></div><div class="r" style="left:34px;top:411px;width:321px;height:1px;background:#A9D08E;"></div><div class="r" style="left:355px;top:411px;width:155px;height:1px;background:#AACB97;"></div><div class="r" style="left:510px;top:411px;width:212px;height:1px;background:#A9D08E;"></div><div class="r" style="left:722px;top:411px;width:622px;height:1px;background:#AACB97;"></div><div class="r" style="left:34px;top:425px;width:321px;height:1px;background:#A9D08E;"></div><div class="r" style="left:355px;top:425px;width:155px;height:1px;background:#AACB97;"></div><div class="r" style="left:510px;top:425px;width:212px;height:1px;background:#A9D08E;"></div><div class="r" style="left:722px;top:425px;width:622px;height:1px;background:#AACB97;"></div><div class="r" style="left:34px;top:439px;width:321px;height:1px;background:#A9D08E;"></div><div class="r" style="left:355px;top:439px;width:155px;height:1px;background:#AACB97;"></div><div class="r" style="left:510px;top:439px;width:212px;height:1px;background:#A9D08E;"></div><div class="r" style="left:722px;top:439px;width:622px;height:1px;background:#AACB97;"></div><div class="r" style="left:34px;top:453px;width:321px;height:1px;background:#A9D08E;"></div><div class="r" style="left:355px;top:453px;width:155px;height:1px;background:#AACB97;"></div><div class="r" style="left:510px;top:453px;width:212px;height:1px;background:#A9D08E;"></div><div class="r" style="left:722px;top:453px;width:622px;height:1px;background:#AACB97;"></div><div class="r" style="left:34px;top:467px;width:321px;height:1px;background:#A9D08E;"></div><div class="r" style="left:355px;top:467px;width:155px;height:1px;background:#AACB97;"></div><div class="r" style="left:510px;top:467px;width:212px;height:1px;background:#A9D08E;"></div><div class="r" style="left:722px;top:467px;width:622px;height:1px;background:#AACB97;"></div><div class="r" style="left:34px;top:481px;width:321px;height:1px;background:#A9D08E;"></div><div class="r" style="left:355px;top:481px;width:155px;height:1px;background:#AACB97;"></div><div class="r" style="left:510px;top:481px;width:212px;height:1px;background:#A9D08E;"></div><div class="r" style="left:722px;top:481px;width:622px;height:1px;background:#AACB97;"></div><div class="r" style="left:34px;top:495px;width:321px;height:1px;background:#A9D08E;"></div><div class="r" style="left:355px;top:495px;width:155px;height:1px;background:#AACB97;"></div><div class="r" style="left:510px;top:495px;width:212px;height:1px;background:#A9D08E;"></div><div class="r" style="left:722px;top:495px;width:622px;height:1px;background:#AACB97;"></div><div class="r" style="left:34px;top:509px;width:321px;height:1px;background:#A9D08E;"></div><div class="r" style="left:355px;top:509px;width:155px;height:1px;background:#AACB97;"></div><div class="r" style="left:510px;top:509px;width:212px;height:1px;background:#A9D08E;"></div><div class="r" style="left:722px;top:509px;width:622px;height:1px;background:#AACB97;"></div><div class="r" style="left:34px;top:523px;width:321px;height:1px;background:#A9D08E;"></div><div class="r" style="left:355px;top:523px;width:155px;height:1px;background:#AACB97;"></div><div class="r" style="left:510px;top:523px;width:212px;height:1px;background:#A9D08E;"></div><div class="r" style="left:722px;top:523px;width:622px;height:1px;background:#AACB97;"></div><div class="r" style="left:34px;top:537px;width:321px;height:1px;background:#A9D08E;"></div><div class="r" style="left:355px;top:537px;width:155px;height:1px;background:#AACB97;"></div><div class="r" style="left:510px;top:537px;width:212px;height:1px;background:#A9D08E;"></div><div class="r" style="left:722px;top:537px;width:622px;height:1px;background:#AACB97;"></div><div class="r" style="left:34px;top:551px;width:321px;height:1px;background:#A9D08E;"></div><div class="r" style="left:355px;top:551px;width:155px;height:1px;background:#AACB97;"></div><div class="r" style="left:510px;top:551px;width:212px;height:1px;background:#A9D08E;"></div><div class="r" style="left:722px;top:551px;width:622px;height:1px;background:#AACB97;"></div><div class="r" style="left:34px;top:565px;width:321px;height:1px;background:#A9D08E;"></div><div class="r" style="left:355px;top:565px;width:155px;height:1px;background:#AACB97;"></div><div class="r" style="left:510px;top:565px;width:212px;height:1px;background:#A9D08E;"></div><div class="r" style="left:722px;top:565px;width:622px;height:1px;background:#AACB97;"></div><div class="r" style="left:34px;top:579px;width:321px;height:1px;background:#A9D08E;"></div><div class="r" style="left:355px;top:579px;width:155px;height:1px;background:#AACB97;"></div><div class="r" style="left:510px;top:579px;width:212px;height:1px;background:#A9D08E;"></div><div class="r" style="left:722px;top:579px;width:622px;height:1px;background:#AACB97;"></div><div class="r" style="left:34px;top:593px;width:321px;height:1px;background:#A9D08E;"></div><div class="r" style="left:355px;top:593px;width:155px;height:1px;background:#AACB97;"></div><div class="r" style="left:510px;top:593px;width:212px;height:1px;background:#A9D08E;"></div><div class="r" style="left:722px;top:593px;width:622px;height:1px;background:#AACB97;"></div><div class="r" style="left:34px;top:607px;width:321px;height:1px;background:#A9D08E;"></div><div class="r" style="left:355px;top:607px;width:155px;height:1px;background:#AACB97;"></div><div class="r" style="left:510px;top:607px;width:212px;height:1px;background:#A9D08E;"></div><div class="r" style="left:722px;top:607px;width:622px;height:1px;background:#AACB97;"></div><div class="r" style="left:34px;top:621px;width:321px;height:1px;background:#A9D08E;"></div><div class="r" style="left:355px;top:621px;width:155px;height:1px;background:#AACB97;"></div><div class="r" style="left:510px;top:621px;width:212px;height:1px;background:#A9D08E;"></div><div class="r" style="left:722px;top:621px;width:622px;height:1px;background:#AACB97;"></div><div class="r" style="left:34px;top:635px;width:321px;height:1px;background:#A9D08E;"></div><div class="r" style="left:355px;top:635px;width:155px;height:1px;background:#AACB97;"></div><div class="r" style="left:510px;top:635px;width:212px;height:1px;background:#A9D08E;"></div><div class="r" style="left:722px;top:635px;width:622px;height:1px;background:#AACB97;"></div><div class="r" style="left:34px;top:649px;width:321px;height:1px;background:#A9D08E;"></div><div class="r" style="left:355px;top:649px;width:155px;height:1px;background:#AACB97;"></div><div class="r" style="left:510px;top:649px;width:212px;height:1px;background:#A9D08E;"></div><div class="r" style="left:722px;top:649px;width:622px;height:1px;background:#AACB97;"></div><div class="r" style="left:34px;top:663px;width:321px;height:1px;background:#A9D08E;"></div><div class="r" style="left:355px;top:663px;width:155px;height:1px;background:#AACB97;"></div><div class="r" style="left:510px;top:663px;width:212px;height:1px;background:#A9D08E;"></div><div class="r" style="left:722px;top:663px;width:622px;height:1px;background:#AACB97;"></div><div class="r" style="left:34px;top:677px;width:321px;height:1px;background:#A9D08E;"></div><div class="r" style="left:355px;top:677px;width:155px;height:1px;background:#AACB97;"></div><div class="r" style="left:510px;top:677px;width:212px;height:1px;background:#A9D08E;"></div><div class="r" style="left:722px;top:677px;width:622px;height:1px;background:#AACB97;"></div><div class="r" style="left:0px;top:215px;width:1344px;height:1px;background:#A0A0A0;"></div><div class="r" style="left:33px;top:203px;width:1px;height:475px;background:#ABABAB;"></div><div class="r" style="left:88px;top:203px;width:1px;height:12px;background:#C8C8C8;"></div><div class="r" style="left:270px;top:203px;width:1px;height:12px;background:#C8C8C8;"></div><div class="r" style="left:354px;top:203px;width:1px;height:12px;background:#C8C8C8;"></div><div class="r" style="left:509px;top:203px;width:1px;height:12px;background:#C8C8C8;"></div><div class="r" style="left:635px;top:203px;width:1px;height:12px;background:#C8C8C8;"></div><div class="r" style="left:671px;top:203px;width:1px;height:12px;background:#C8C8C8;"></div><div class="r" style="left:722px;top:203px;width:1px;height:12px;background:#C8C8C8;"></div><div class="r" style="left:791px;top:203px;width:1px;height:12px;background:#C8C8C8;"></div><div class="r" style="left:887px;top:203px;width:1px;height:12px;background:#C8C8C8;"></div><div class="r" style="left:963px;top:203px;width:1px;height:12px;background:#C8C8C8;"></div><div class="r" style="left:1025px;top:203px;width:1px;height:12px;background:#C8C8C8;"></div><div class="r" style="left:1073px;top:203px;width:1px;height:12px;background:#C8C8C8;"></div><div class="r" style="left:1117px;top:203px;width:1px;height:12px;background:#C8C8C8;"></div><div class="r" style="left:1186px;top:203px;width:1px;height:12px;background:#C8C8C8;"></div><div class="r" style="left:1267px;top:203px;width:1px;height:12px;background:#C8C8C8;"></div><div class="r" style="left:1341px;top:203px;width:1px;height:12px;background:#C8C8C8;"></div><div class="r" style="left:0px;top:229px;width:33px;height:1px;background:#C8C8C8;"></div><div class="r" style="left:0px;top:243px;width:33px;height:1px;background:#C8C8C8;"></div><div class="r" style="left:0px;top:257px;width:33px;height:1px;background:#C8C8C8;"></div><div class="r" style="left:0px;top:271px;width:33px;height:1px;background:#C8C8C8;"></div><div class="r" style="left:0px;top:285px;width:33px;height:1px;background:#C8C8C8;"></div><div class="r" style="left:0px;top:299px;width:33px;height:1px;background:#C8C8C8;"></div><div class="r" style="left:0px;top:313px;width:33px;height:1px;background:#C8C8C8;"></div><div class="r" style="left:0px;top:327px;width:33px;height:1px;background:#C8C8C8;"></div><div class="r" style="left:0px;top:341px;width:33px;height:1px;background:#C8C8C8;"></div><div class="r" style="left:0px;top:355px;width:33px;height:1px;background:#C8C8C8;"></div><div class="r" style="left:0px;top:369px;width:33px;height:1px;background:#C8C8C8;"></div><div class="r" style="left:0px;top:383px;width:33px;height:1px;background:#C8C8C8;"></div><div class="r" style="left:0px;top:397px;width:33px;height:1px;background:#C8C8C8;"></div><div class="r" style="left:0px;top:411px;width:33px;height:1px;background:#C8C8C8;"></div><div class="r" style="left:0px;top:425px;width:33px;height:1px;background:#C8C8C8;"></div><div class="r" style="left:0px;top:439px;width:33px;height:1px;background:#C8C8C8;"></div><div class="r" style="left:0px;top:453px;width:33px;height:1px;background:#C8C8C8;"></div><div class="r" style="left:0px;top:467px;width:33px;height:1px;background:#C8C8C8;"></div><div class="r" style="left:0px;top:481px;width:33px;height:1px;background:#C8C8C8;"></div><div class="r" style="left:0px;top:495px;width:33px;height:1px;background:#C8C8C8;"></div><div class="r" style="left:0px;top:509px;width:33px;height:1px;background:#C8C8C8;"></div><div class="r" style="left:0px;top:523px;width:33px;height:1px;background:#C8C8C8;"></div><div class="r" style="left:0px;top:537px;width:33px;height:1px;background:#C8C8C8;"></div><div class="r" style="left:0px;top:551px;width:33px;height:1px;background:#C8C8C8;"></div><div class="r" style="left:0px;top:565px;width:33px;height:1px;background:#C8C8C8;"></div><div class="r" style="left:0px;top:579px;width:33px;height:1px;background:#C8C8C8;"></div><div class="r" style="left:0px;top:593px;width:33px;height:1px;background:#C8C8C8;"></div><div class="r" style="left:0px;top:607px;width:33px;height:1px;background:#C8C8C8;"></div><div class="r" style="left:0px;top:621px;width:33px;height:1px;background:#C8C8C8;"></div><div class="r" style="left:0px;top:635px;width:33px;height:1px;background:#C8C8C8;"></div><div class="r" style="left:0px;top:649px;width:33px;height:1px;background:#C8C8C8;"></div><div class="r" style="left:0px;top:663px;width:33px;height:1px;background:#C8C8C8;"></div><div class="r" style="left:0px;top:677px;width:33px;height:1px;background:#C8C8C8;"></div><div class="t" style="left:-39.0px;width:200px;text-align:center;top:204.34px;font-size:10px;color:#222;">A</div><div class="t" style="left:79.5px;width:200px;text-align:center;top:204.34px;font-size:10px;color:#222;">B</div><div class="t" style="left:212.5px;width:200px;text-align:center;top:204.34px;font-size:10px;color:#222;">C</div><div class="t" style="left:332.0px;width:200px;text-align:center;top:204.34px;font-size:10px;color:#222;">D</div><div class="t" style="left:472.5px;width:200px;text-align:center;top:204.34px;font-size:10px;color:#222;">E</div><div class="t" style="left:553.5px;width:200px;text-align:center;top:204.34px;font-size:10px;color:#222;">F</div><div class="t" style="left:597.0px;width:200px;text-align:center;top:204.34px;font-size:10px;color:#222;">G</div><div class="t" style="left:657.0px;width:200px;text-align:center;top:204.34px;font-size:10px;color:#222;">H</div><div class="t" style="left:739.5px;width:200px;text-align:center;top:204.34px;font-size:10px;color:#222;">I</div><div class="t" style="left:825.5px;width:200px;text-align:center;top:204.34px;font-size:10px;color:#222;">J</div><div class="t" style="left:894.5px;width:200px;text-align:center;top:204.34px;font-size:10px;color:#222;">K</div><div class="t" style="left:949.5px;width:200px;text-align:center;top:204.34px;font-size:10px;color:#222;">L</div><div class="t" style="left:995.5px;width:200px;text-align:center;top:204.34px;font-size:10px;color:#222;">M</div><div class="t" style="left:1052.0px;width:200px;text-align:center;top:204.34px;font-size:10px;color:#222;">N</div><div class="t" style="left:1127.0px;width:200px;text-align:center;top:204.34px;font-size:10px;color:#222;">O</div><div class="t" style="left:1204.5px;width:200px;text-align:center;top:204.34px;font-size:10px;color:#222;">P</div><div class="t" style="left:-83.1px;width:200px;text-align:center;top:217.21px;font-size:10.5px;color:#111;letter-spacing:-0.9px;-webkit-text-stroke:0.1px #111;">5703</div><div class="t" style="left:91.5px;top:218.17px;font-size:10.2px;color:#000;-webkit-text-stroke:0.15px #000;word-spacing:-0.45px;letter-spacing:0.03px;">Luis M Fandos</div><div class="t" style="left:275.5px;top:218.17px;font-size:10.2px;color:#000;-webkit-text-stroke:0.15px #000;word-spacing:-0.45px;letter-spacing:0.03px;">M.D.</div><div class="t" style="left:357.5px;top:218.17px;font-size:10.2px;color:#000;-webkit-text-stroke:0.15px #000;word-spacing:-0.45px;letter-spacing:0.03px;">Interventional Pain Management</div><div class="t" style="left:512.5px;top:218.17px;font-size:10.2px;color:#000;-webkit-text-stroke:0.15px #000;word-spacing:-0.45px;letter-spacing:0.03px;">Babylon</div><div class="t" style="left:638.5px;top:218.17px;font-size:10.2px;color:#000;-webkit-text-stroke:0.15px #000;word-spacing:-0.45px;letter-spacing:0.03px;">NY</div><div class="t" style="left:-83.1px;width:200px;text-align:center;top:231.21px;font-size:10.5px;color:#111;letter-spacing:-0.9px;-webkit-text-stroke:0.1px #111;">5704</div><div class="t" style="left:91.5px;top:232.17px;font-size:10.2px;color:#000;-webkit-text-stroke:0.15px #000;word-spacing:-0.45px;letter-spacing:0.03px;">Luis M Tumialan</div><div class="t" style="left:275.5px;top:232.17px;font-size:10.2px;color:#000;-webkit-text-stroke:0.15px #000;word-spacing:-0.45px;letter-spacing:0.03px;">M.D.</div><div class="t" style="left:357.5px;top:232.17px;font-size:10.2px;color:#000;-webkit-text-stroke:0.15px #000;word-spacing:-0.45px;letter-spacing:0.03px;">Neurosurgery</div><div class="t" style="left:512.5px;top:232.17px;font-size:10.2px;color:#000;-webkit-text-stroke:0.15px #000;word-spacing:-0.45px;letter-spacing:0.03px;">Scottsdale</div><div class="t" style="left:638.5px;top:232.17px;font-size:10.2px;color:#000;-webkit-text-stroke:0.15px #000;word-spacing:-0.45px;letter-spacing:0.03px;">AZ</div><div class="t" style="left:-83.1px;width:200px;text-align:center;top:245.21px;font-size:10.5px;color:#111;letter-spacing:-0.9px;-webkit-text-stroke:0.1px #111;">5705</div><div class="t" style="left:91.5px;top:246.17px;font-size:10.2px;color:#000;-webkit-text-stroke:0.15px #000;word-spacing:-0.45px;letter-spacing:0.03px;">Luis Nieves</div><div class="t" style="left:275.5px;top:246.17px;font-size:10.2px;color:#000;-webkit-text-stroke:0.15px #000;word-spacing:-0.45px;letter-spacing:0.03px;">M.D.</div><div class="t" style="left:357.5px;top:246.17px;font-size:10.2px;color:#000;-webkit-text-stroke:0.15px #000;word-spacing:-0.45px;letter-spacing:0.03px;">Family Practice</div><div class="t" style="left:512.5px;top:246.17px;font-size:10.2px;color:#000;-webkit-text-stroke:0.15px #000;word-spacing:-0.45px;letter-spacing:0.03px;">Hurst</div><div class="t" style="left:638.5px;top:246.17px;font-size:10.2px;color:#000;-webkit-text-stroke:0.15px #000;word-spacing:-0.45px;letter-spacing:0.03px;">TX</div><div class="t" style="left:-83.1px;width:200px;text-align:center;top:259.21px;font-size:10.5px;color:#111;letter-spacing:-0.9px;-webkit-text-stroke:0.1px #111;">5706</div><div class="t" style="left:91.5px;top:260.17px;font-size:10.2px;color:#000;-webkit-text-stroke:0.15px #000;word-spacing:-0.45px;letter-spacing:0.03px;">Luis R Ramos-Duran</div><div class="t" style="left:275.5px;top:260.17px;font-size:10.2px;color:#000;-webkit-text-stroke:0.15px #000;word-spacing:-0.45px;letter-spacing:0.03px;">M.D.</div><div class="t" style="left:357.5px;top:260.17px;font-size:10.2px;color:#000;-webkit-text-stroke:0.15px #000;word-spacing:-0.45px;letter-spacing:0.03px;">Diagnostic Radiology</div><div class="t" style="left:512.5px;top:260.17px;font-size:10.2px;color:#000;-webkit-text-stroke:0.15px #000;word-spacing:-0.45px;letter-spacing:0.03px;">Charleston</div><div class="t" style="left:638.5px;top:260.17px;font-size:10.2px;color:#000;-webkit-text-stroke:0.15px #000;word-spacing:-0.45px;letter-spacing:0.03px;">SC</div><div class="t" style="left:-83.1px;width:200px;text-align:center;top:273.21px;font-size:10.5px;color:#111;letter-spacing:-0.9px;-webkit-text-stroke:0.1px #111;">5707</div><div class="t" style="left:91.5px;top:274.17px;font-size:10.2px;color:#000;-webkit-text-stroke:0.15px #000;word-spacing:-0.45px;letter-spacing:0.03px;">Luis Rodriguez</div><div class="t" style="left:275.5px;top:274.17px;font-size:10.2px;color:#000;-webkit-text-stroke:0.15px #000;word-spacing:-0.45px;letter-spacing:0.03px;">MD</div><div class="t" style="left:357.5px;top:274.17px;font-size:10.2px;color:#000;-webkit-text-stroke:0.15px #000;word-spacing:-0.45px;letter-spacing:0.03px;">Diagnostic Radiology</div><div class="t" style="left:512.5px;top:274.17px;font-size:10.2px;color:#000;-webkit-text-stroke:0.15px #000;word-spacing:-0.45px;letter-spacing:0.03px;">Middletown</div><div class="t" style="left:638.5px;top:274.17px;font-size:10.2px;color:#000;-webkit-text-stroke:0.15px #000;word-spacing:-0.45px;letter-spacing:0.03px;">NY</div><div class="t" style="left:-83.1px;width:200px;text-align:center;top:287.21px;font-size:10.5px;color:#111;letter-spacing:-0.9px;-webkit-text-stroke:0.1px #111;">5708</div><div class="t" style="left:91.5px;top:288.17px;font-size:10.2px;color:#000;-webkit-text-stroke:0.15px #000;word-spacing:-0.45px;letter-spacing:0.03px;">Lukas P Zebala</div><div class="t" style="left:275.5px;top:288.17px;font-size:10.2px;color:#000;-webkit-text-stroke:0.15px #000;word-spacing:-0.45px;letter-spacing:0.03px;">MD</div><div class="t" style="left:357.5px;top:288.17px;font-size:10.2px;color:#000;-webkit-text-stroke:0.15px #000;word-spacing:-0.45px;letter-spacing:0.03px;">Orthopedic Surgery</div><div class="t" style="left:512.5px;top:288.17px;font-size:10.2px;color:#000;-webkit-text-stroke:0.15px #000;word-spacing:-0.45px;letter-spacing:0.03px;">Saint Louis</div><div class="t" style="left:638.5px;top:288.17px;font-size:10.2px;color:#000;-webkit-text-stroke:0.15px #000;word-spacing:-0.45px;letter-spacing:0.03px;">MO</div><div class="t" style="left:-83.1px;width:200px;text-align:center;top:301.21px;font-size:10.5px;color:#111;letter-spacing:-0.9px;-webkit-text-stroke:0.1px #111;">5709</div><div class="t" style="left:91.5px;top:302.17px;font-size:10.2px;color:#000;-webkit-text-stroke:0.15px #000;word-spacing:-0.45px;letter-spacing:0.03px;">Lukasz J Curylo</div><div class="t" style="left:275.5px;top:302.17px;font-size:10.2px;color:#000;-webkit-text-stroke:0.15px #000;word-spacing:-0.45px;letter-spacing:0.03px;">M.D.</div><div class="t" style="left:357.5px;top:302.17px;font-size:10.2px;color:#000;-webkit-text-stroke:0.15px #000;word-spacing:-0.45px;letter-spacing:0.03px;">Orthopedic Surgery</div><div class="t" style="left:512.5px;top:302.17px;font-size:10.2px;color:#000;-webkit-text-stroke:0.15px #000;word-spacing:-0.45px;letter-spacing:0.03px;">Saint Louis</div><div class="t" style="left:638.5px;top:302.17px;font-size:10.2px;color:#000;-webkit-text-stroke:0.15px #000;word-spacing:-0.45px;letter-spacing:0.03px;">MO</div><div class="t" style="left:-83.1px;width:200px;text-align:center;top:315.21px;font-size:10.5px;color:#111;letter-spacing:-0.9px;-webkit-text-stroke:0.1px #111;">5710</div><div class="t" style="left:91.5px;top:316.17px;font-size:10.2px;color:#000;-webkit-text-stroke:0.15px #000;word-spacing:-0.45px;letter-spacing:0.03px;">Luke A Hiatt</div><div class="t" style="left:275.5px;top:316.17px;font-size:10.2px;color:#000;-webkit-text-stroke:0.15px #000;word-spacing:-0.45px;letter-spacing:0.03px;">M.D.</div><div class="t" style="left:357.5px;top:316.17px;font-size:10.2px;color:#000;-webkit-text-stroke:0.15px #000;word-spacing:-0.45px;letter-spacing:0.03px;">Orthopedic Surgery</div><div class="t" style="left:512.5px;top:316.17px;font-size:10.2px;color:#000;-webkit-text-stroke:0.15px #000;word-spacing:-0.45px;letter-spacing:0.03px;">Roseville</div><div class="t" style="left:638.5px;top:316.17px;font-size:10.2px;color:#000;-webkit-text-stroke:0.15px #000;word-spacing:-0.45px;letter-spacing:0.03px;">CA</div><div class="t" style="left:-83.1px;width:200px;text-align:center;top:329.21px;font-size:10.5px;color:#111;letter-spacing:-0.9px;-webkit-text-stroke:0.1px #111;">5711</div><div class="t" style="left:91.5px;top:330.17px;font-size:10.2px;color:#000;-webkit-text-stroke:0.15px #000;word-spacing:-0.45px;letter-spacing:0.03px;">Luke D Liu</div><div class="t" style="left:275.5px;top:330.17px;font-size:10.2px;color:#000;-webkit-text-stroke:0.15px #000;word-spacing:-0.45px;letter-spacing:0.03px;">M.D.</div><div class="t" style="left:357.5px;top:330.17px;font-size:10.2px;color:#000;-webkit-text-stroke:0.15px #000;word-spacing:-0.45px;letter-spacing:0.03px;">Anesthesiology</div><div class="t" style="left:512.5px;top:330.17px;font-size:10.2px;color:#000;-webkit-text-stroke:0.15px #000;word-spacing:-0.45px;letter-spacing:0.03px;">Anchorage</div><div class="t" style="left:638.5px;top:330.17px;font-size:10.2px;color:#000;-webkit-text-stroke:0.15px #000;word-spacing:-0.45px;letter-spacing:0.03px;">AK</div><div class="t" style="left:-83.1px;width:200px;text-align:center;top:343.21px;font-size:10.5px;color:#111;letter-spacing:-0.9px;-webkit-text-stroke:0.1px #111;">5712</div><div class="t" style="left:91.5px;top:344.17px;font-size:10.2px;color:#000;-webkit-text-stroke:0.15px #000;word-spacing:-0.45px;letter-spacing:0.03px;">Luke H Chang</div><div class="t" style="left:275.5px;top:344.17px;font-size:10.2px;color:#000;-webkit-text-stroke:0.15px #000;word-spacing:-0.45px;letter-spacing:0.03px;">M.D.</div><div class="t" style="left:357.5px;top:344.17px;font-size:10.2px;color:#000;-webkit-text-stroke:0.15px #000;word-spacing:-0.45px;letter-spacing:0.03px;">Anesthesiology</div><div class="t" style="left:512.5px;top:344.17px;font-size:10.2px;color:#000;-webkit-text-stroke:0.15px #000;word-spacing:-0.45px;letter-spacing:0.03px;">Pasadena</div><div class="t" style="left:638.5px;top:344.17px;font-size:10.2px;color:#000;-webkit-text-stroke:0.15px #000;word-spacing:-0.45px;letter-spacing:0.03px;">CA</div><div class="t" style="left:-83.1px;width:200px;text-align:center;top:357.21px;font-size:10.5px;color:#111;letter-spacing:-0.9px;-webkit-text-stroke:0.1px #111;">5713</div><div class="t" style="left:91.5px;top:358.17px;font-size:10.2px;color:#000;-webkit-text-stroke:0.15px #000;word-spacing:-0.45px;letter-spacing:0.03px;">Luke J Budleski</div><div class="t" style="left:275.5px;top:358.17px;font-size:10.2px;color:#000;-webkit-text-stroke:0.15px #000;word-spacing:-0.45px;letter-spacing:0.03px;">D.O.</div><div class="t" style="left:357.5px;top:358.17px;font-size:10.2px;color:#000;-webkit-text-stroke:0.15px #000;word-spacing:-0.45px;letter-spacing:0.03px;">Physical Medicine and Rehabilita</div><div class="t" style="left:512.5px;top:358.17px;font-size:10.2px;color:#000;-webkit-text-stroke:0.15px #000;word-spacing:-0.45px;letter-spacing:0.03px;">Wausau</div><div class="t" style="left:638.5px;top:358.17px;font-size:10.2px;color:#000;-webkit-text-stroke:0.15px #000;word-spacing:-0.45px;letter-spacing:0.03px;">WI</div><div class="t" style="left:-83.1px;width:200px;text-align:center;top:371.21px;font-size:10.5px;color:#111;letter-spacing:-0.9px;-webkit-text-stroke:0.1px #111;">5714</div><div class="t" style="left:91.5px;top:372.17px;font-size:10.2px;color:#000;-webkit-text-stroke:0.15px #000;word-spacing:-0.45px;letter-spacing:0.03px;">Luke M Douthitt</div><div class="t" style="left:275.5px;top:372.17px;font-size:10.2px;color:#000;-webkit-text-stroke:0.15px #000;word-spacing:-0.45px;letter-spacing:0.03px;">M.D.</div><div class="t" style="left:357.5px;top:372.17px;font-size:10.2px;color:#000;-webkit-text-stroke:0.15px #000;word-spacing:-0.45px;letter-spacing:0.03px;">Anesthesiology</div><div class="t" style="left:512.5px;top:372.17px;font-size:10.2px;color:#000;-webkit-text-stroke:0.15px #000;word-spacing:-0.45px;letter-spacing:0.03px;">Memphis</div><div class="t" style="left:638.5px;top:372.17px;font-size:10.2px;color:#000;-webkit-text-stroke:0.15px #000;word-spacing:-0.45px;letter-spacing:0.03px;">TN</div><div class="t" style="left:-83.1px;width:200px;text-align:center;top:385.21px;font-size:10.5px;color:#111;letter-spacing:-0.9px;-webkit-text-stroke:0.1px #111;">5715</div><div class="t" style="left:91.5px;top:386.17px;font-size:10.2px;color:#000;-webkit-text-stroke:0.15px #000;word-spacing:-0.45px;letter-spacing:0.03px;">Luke Madigan</div><div class="t" style="left:275.5px;top:386.17px;font-size:10.2px;color:#000;-webkit-text-stroke:0.15px #000;word-spacing:-0.45px;letter-spacing:0.03px;">MD</div><div class="t" style="left:357.5px;top:386.17px;font-size:10.2px;color:#000;-webkit-text-stroke:0.15px #000;word-spacing:-0.45px;letter-spacing:0.03px;">Orthopedic Surgery</div><div class="t" style="left:512.5px;top:386.17px;font-size:10.2px;color:#000;-webkit-text-stroke:0.15px #000;word-spacing:-0.45px;letter-spacing:0.03px;">Knoxville</div><div class="t" style="left:638.5px;top:386.17px;font-size:10.2px;color:#000;-webkit-text-stroke:0.15px #000;word-spacing:-0.45px;letter-spacing:0.03px;">TN</div><div class="t" style="left:-83.1px;width:200px;text-align:center;top:399.21px;font-size:10.5px;color:#111;letter-spacing:-0.9px;-webkit-text-stroke:0.1px #111;">5716</div><div class="t" style="left:91.5px;top:400.17px;font-size:10.2px;color:#000;-webkit-text-stroke:0.15px #000;word-spacing:-0.45px;letter-spacing:0.03px;">Luke S Yoon</div><div class="t" style="left:275.5px;top:400.17px;font-size:10.2px;color:#000;-webkit-text-stroke:0.15px #000;word-spacing:-0.45px;letter-spacing:0.03px;">M.D.</div><div class="t" style="left:357.5px;top:400.17px;font-size:10.2px;color:#000;-webkit-text-stroke:0.15px #000;word-spacing:-0.45px;letter-spacing:0.03px;">Diagnostic Radiology</div><div class="t" style="left:512.5px;top:400.17px;font-size:10.2px;color:#000;-webkit-text-stroke:0.15px #000;word-spacing:-0.45px;letter-spacing:0.03px;">Stanford</div><div class="t" style="left:638.5px;top:400.17px;font-size:10.2px;color:#000;-webkit-text-stroke:0.15px #000;word-spacing:-0.45px;letter-spacing:0.03px;">CA</div><div class="t" style="left:-83.1px;width:200px;text-align:center;top:413.21px;font-size:10.5px;color:#111;letter-spacing:-0.9px;-webkit-text-stroke:0.1px #111;">5717</div><div class="t" style="left:91.5px;top:414.17px;font-size:10.2px;color:#000;-webkit-text-stroke:0.15px #000;word-spacing:-0.45px;letter-spacing:0.03px;">Luke V Rigolosi</div><div class="t" style="left:275.5px;top:414.17px;font-size:10.2px;color:#000;-webkit-text-stroke:0.15px #000;word-spacing:-0.45px;letter-spacing:0.03px;">MD</div><div class="t" style="left:357.5px;top:414.17px;font-size:10.2px;color:#000;-webkit-text-stroke:0.15px #000;word-spacing:-0.45px;letter-spacing:0.03px;">Pain Management</div><div class="t" style="left:512.5px;top:414.17px;font-size:10.2px;color:#000;-webkit-text-stroke:0.15px #000;word-spacing:-0.45px;letter-spacing:0.03px;">Albany</div><div class="t" style="left:638.5px;top:414.17px;font-size:10.2px;color:#000;-webkit-text-stroke:0.15px #000;word-spacing:-0.45px;letter-spacing:0.03px;">NY</div><div class="t" style="left:-83.1px;width:200px;text-align:center;top:427.21px;font-size:10.5px;color:#111;letter-spacing:-0.9px;-webkit-text-stroke:0.1px #111;">5718</div><div class="t" style="left:91.5px;top:428.17px;font-size:10.2px;color:#000;-webkit-text-stroke:0.15px #000;word-spacing:-0.45px;letter-spacing:0.03px;">Luther C Rollins Iii Md</div><div class="t" style="left:275.5px;top:428.17px;font-size:10.2px;color:#000;-webkit-text-stroke:0.15px #000;word-spacing:-0.45px;letter-spacing:0.03px;">MD</div><div class="t" style="left:357.5px;top:428.17px;font-size:10.2px;color:#000;-webkit-text-stroke:0.15px #000;word-spacing:-0.45px;letter-spacing:0.03px;">Anesthesiology</div><div class="t" style="left:512.5px;top:428.17px;font-size:10.2px;color:#000;-webkit-text-stroke:0.15px #000;word-spacing:-0.45px;letter-spacing:0.03px;">Atlanta</div><div class="t" style="left:638.5px;top:428.17px;font-size:10.2px;color:#000;-webkit-text-stroke:0.15px #000;word-spacing:-0.45px;letter-spacing:0.03px;">GA</div><div class="t" style="left:-83.1px;width:200px;text-align:center;top:441.21px;font-size:10.5px;color:#111;letter-spacing:-0.9px;-webkit-text-stroke:0.1px #111;">5719</div><div class="t" style="left:91.5px;top:442.17px;font-size:10.2px;color:#000;-webkit-text-stroke:0.15px #000;word-spacing:-0.45px;letter-spacing:0.03px;">Luvell L Glanton</div><div class="t" style="left:275.5px;top:442.17px;font-size:10.2px;color:#000;-webkit-text-stroke:0.15px #000;word-spacing:-0.45px;letter-spacing:0.03px;">M.D.</div><div class="t" style="left:357.5px;top:442.17px;font-size:10.2px;color:#000;-webkit-text-stroke:0.15px #000;word-spacing:-0.45px;letter-spacing:0.03px;">Anesthesiology</div><div class="t" style="left:512.5px;top:442.17px;font-size:10.2px;color:#000;-webkit-text-stroke:0.15px #000;word-spacing:-0.45px;letter-spacing:0.03px;">Hannibal</div><div class="t" style="left:638.5px;top:442.17px;font-size:10.2px;color:#000;-webkit-text-stroke:0.15px #000;word-spacing:-0.45px;letter-spacing:0.03px;">MO</div><div class="t" style="left:-83.1px;width:200px;text-align:center;top:455.21px;font-size:10.5px;color:#111;letter-spacing:-0.9px;-webkit-text-stroke:0.1px #111;">5720</div><div class="t" style="left:91.5px;top:456.17px;font-size:10.2px;color:#000;-webkit-text-stroke:0.15px #000;word-spacing:-0.45px;letter-spacing:0.03px;">Luz A Feldmann</div><div class="t" style="left:275.5px;top:456.17px;font-size:10.2px;color:#000;-webkit-text-stroke:0.15px #000;word-spacing:-0.45px;letter-spacing:0.03px;">M.D.</div><div class="t" style="left:357.5px;top:456.17px;font-size:10.2px;color:#000;-webkit-text-stroke:0.15px #000;word-spacing:-0.45px;letter-spacing:0.03px;">Interventional Pain Management</div><div class="t" style="left:512.5px;top:456.17px;font-size:10.2px;color:#000;-webkit-text-stroke:0.15px #000;word-spacing:-0.45px;letter-spacing:0.03px;">Arlington Heights</div><div class="t" style="left:638.5px;top:456.17px;font-size:10.2px;color:#000;-webkit-text-stroke:0.15px #000;word-spacing:-0.45px;letter-spacing:0.03px;">IL</div><div class="t" style="left:-83.1px;width:200px;text-align:center;top:469.21px;font-size:10.5px;color:#111;letter-spacing:-0.9px;-webkit-text-stroke:0.1px #111;">5721</div><div class="t" style="left:91.5px;top:470.17px;font-size:10.2px;color:#000;-webkit-text-stroke:0.15px #000;word-spacing:-0.45px;letter-spacing:0.03px;">Lyle W Posecion</div><div class="t" style="left:275.5px;top:470.17px;font-size:10.2px;color:#000;-webkit-text-stroke:0.15px #000;word-spacing:-0.45px;letter-spacing:0.03px;">M.D.</div><div class="t" style="left:357.5px;top:470.17px;font-size:10.2px;color:#000;-webkit-text-stroke:0.15px #000;word-spacing:-0.45px;letter-spacing:0.03px;">Physical Medicine and Rehabilita</div><div class="t" style="left:512.5px;top:470.17px;font-size:10.2px;color:#000;-webkit-text-stroke:0.15px #000;word-spacing:-0.45px;letter-spacing:0.03px;">White Plains</div><div class="t" style="left:638.5px;top:470.17px;font-size:10.2px;color:#000;-webkit-text-stroke:0.15px #000;word-spacing:-0.45px;letter-spacing:0.03px;">NY</div><div class="t" style="left:-83.1px;width:200px;text-align:center;top:483.21px;font-size:10.5px;color:#111;letter-spacing:-0.9px;-webkit-text-stroke:0.1px #111;">5722</div><div class="t" style="left:91.5px;top:484.17px;font-size:10.2px;color:#000;-webkit-text-stroke:0.15px #000;word-spacing:-0.45px;letter-spacing:0.03px;">Lyle Young</div><div class="t" style="left:275.5px;top:484.17px;font-size:10.2px;color:#000;-webkit-text-stroke:0.15px #000;word-spacing:-0.45px;letter-spacing:0.03px;">MD</div><div class="t" style="left:357.5px;top:484.17px;font-size:10.2px;color:#000;-webkit-text-stroke:0.15px #000;word-spacing:-0.45px;letter-spacing:0.03px;">Orthopedic Surgery</div><div class="t" style="left:512.5px;top:484.17px;font-size:10.2px;color:#000;-webkit-text-stroke:0.15px #000;word-spacing:-0.45px;letter-spacing:0.03px;">Tempe</div><div class="t" style="left:638.5px;top:484.17px;font-size:10.2px;color:#000;-webkit-text-stroke:0.15px #000;word-spacing:-0.45px;letter-spacing:0.03px;">AZ</div><div class="t" style="left:-83.1px;width:200px;text-align:center;top:497.21px;font-size:10.5px;color:#111;letter-spacing:-0.9px;-webkit-text-stroke:0.1px #111;">5723</div><div class="t" style="left:91.5px;top:498.17px;font-size:10.2px;color:#000;-webkit-text-stroke:0.15px #000;word-spacing:-0.45px;letter-spacing:0.03px;">Lyman W Whitlatch</div><div class="t" style="left:275.5px;top:498.17px;font-size:10.2px;color:#000;-webkit-text-stroke:0.15px #000;word-spacing:-0.45px;letter-spacing:0.03px;">MD, PHD</div><div class="t" style="left:357.5px;top:498.17px;font-size:10.2px;color:#000;-webkit-text-stroke:0.15px #000;word-spacing:-0.45px;letter-spacing:0.03px;">Neurosurgery</div><div class="t" style="left:512.5px;top:498.17px;font-size:10.2px;color:#000;-webkit-text-stroke:0.15px #000;word-spacing:-0.45px;letter-spacing:0.03px;">Visalia</div><div class="t" style="left:638.5px;top:498.17px;font-size:10.2px;color:#000;-webkit-text-stroke:0.15px #000;word-spacing:-0.45px;letter-spacing:0.03px;">CA</div><div class="t" style="left:-83.1px;width:200px;text-align:center;top:511.21px;font-size:10.5px;color:#111;letter-spacing:-0.9px;-webkit-text-stroke:0.1px #111;">5724</div><div class="t" style="left:91.5px;top:512.17px;font-size:10.2px;color:#000;-webkit-text-stroke:0.15px #000;word-spacing:-0.45px;letter-spacing:0.03px;">Lynda Groh</div><div class="t" style="left:275.5px;top:512.17px;font-size:10.2px;color:#000;-webkit-text-stroke:0.15px #000;word-spacing:-0.45px;letter-spacing:0.03px;">MD</div><div class="t" style="left:357.5px;top:512.17px;font-size:10.2px;color:#000;-webkit-text-stroke:0.15px #000;word-spacing:-0.45px;letter-spacing:0.03px;">Anesthesiology</div><div class="t" style="left:512.5px;top:512.17px;font-size:10.2px;color:#000;-webkit-text-stroke:0.15px #000;word-spacing:-0.45px;letter-spacing:0.03px;">Cincinnati</div><div class="t" style="left:638.5px;top:512.17px;font-size:10.2px;color:#000;-webkit-text-stroke:0.15px #000;word-spacing:-0.45px;letter-spacing:0.03px;">OH</div><div class="t" style="left:-83.1px;width:200px;text-align:center;top:525.21px;font-size:10.5px;color:#111;letter-spacing:-0.9px;-webkit-text-stroke:0.1px #111;">5725</div><div class="t" style="left:91.5px;top:526.17px;font-size:10.2px;color:#000;-webkit-text-stroke:0.15px #000;word-spacing:-0.45px;letter-spacing:0.03px;">Lynn M Bartl</div><div class="t" style="left:275.5px;top:526.17px;font-size:10.2px;color:#000;-webkit-text-stroke:0.15px #000;word-spacing:-0.45px;letter-spacing:0.03px;">M.D.</div><div class="t" style="left:357.5px;top:526.17px;font-size:10.2px;color:#000;-webkit-text-stroke:0.15px #000;word-spacing:-0.45px;letter-spacing:0.03px;">Neurosurgery</div><div class="t" style="left:512.5px;top:526.17px;font-size:10.2px;color:#000;-webkit-text-stroke:0.15px #000;word-spacing:-0.45px;letter-spacing:0.03px;">Waukesha</div><div class="t" style="left:638.5px;top:526.17px;font-size:10.2px;color:#000;-webkit-text-stroke:0.15px #000;word-spacing:-0.45px;letter-spacing:0.03px;">WI</div><div class="t" style="left:-83.1px;width:200px;text-align:center;top:539.21px;font-size:10.5px;color:#111;letter-spacing:-0.9px;-webkit-text-stroke:0.1px #111;">5726</div><div class="t" style="left:91.5px;top:540.17px;font-size:10.2px;color:#000;-webkit-text-stroke:0.15px #000;word-spacing:-0.45px;letter-spacing:0.03px;">Lynn M Fraser</div><div class="t" style="left:275.5px;top:540.17px;font-size:10.2px;color:#000;-webkit-text-stroke:0.15px #000;word-spacing:-0.45px;letter-spacing:0.03px;">M.D.</div><div class="t" style="left:357.5px;top:540.17px;font-size:10.2px;color:#000;-webkit-text-stroke:0.15px #000;word-spacing:-0.45px;letter-spacing:0.03px;">Anesthesiology</div><div class="t" style="left:512.5px;top:540.17px;font-size:10.2px;color:#000;-webkit-text-stroke:0.15px #000;word-spacing:-0.45px;letter-spacing:0.03px;">Pinehurst</div><div class="t" style="left:638.5px;top:540.17px;font-size:10.2px;color:#000;-webkit-text-stroke:0.15px #000;word-spacing:-0.45px;letter-spacing:0.03px;">NC</div><div class="t" style="left:-83.1px;width:200px;text-align:center;top:553.21px;font-size:10.5px;color:#111;letter-spacing:-0.9px;-webkit-text-stroke:0.1px #111;">5727</div><div class="t" style="left:91.5px;top:554.17px;font-size:10.2px;color:#000;-webkit-text-stroke:0.15px #000;word-spacing:-0.45px;letter-spacing:0.03px;">Lynn M Gaufin</div><div class="t" style="left:275.5px;top:554.17px;font-size:10.2px;color:#000;-webkit-text-stroke:0.15px #000;word-spacing:-0.45px;letter-spacing:0.03px;">M.D.</div><div class="t" style="left:359.8px;top:554.17px;font-size:10.2px;color:#000;-webkit-text-stroke:0.15px #000;word-spacing:-0.45px;letter-spacing:0.03px;">Neurosurgery</div><div class="t" style="left:512.5px;top:554.17px;font-size:10.2px;color:#000;-webkit-text-stroke:0.15px #000;word-spacing:-0.45px;letter-spacing:0.03px;">Provo</div><div class="t" style="left:638.5px;top:554.17px;font-size:10.2px;color:#000;-webkit-text-stroke:0.15px #000;word-spacing:-0.45px;letter-spacing:0.03px;">UT</div><div class="t" style="left:-83.1px;width:200px;text-align:center;top:567.21px;font-size:10.5px;color:#111;letter-spacing:-0.9px;-webkit-text-stroke:0.1px #111;">5728</div><div class="t" style="left:91.5px;top:568.17px;font-size:10.2px;color:#000;-webkit-text-stroke:0.15px #000;word-spacing:-0.45px;letter-spacing:0.03px;">Lynn M Nelson</div><div class="t" style="left:275.5px;top:568.17px;font-size:10.2px;color:#000;-webkit-text-stroke:0.15px #000;word-spacing:-0.45px;letter-spacing:0.03px;">MD</div><div class="t" style="left:359.8px;top:568.17px;font-size:10.2px;color:#000;-webkit-text-stroke:0.15px #000;word-spacing:-0.45px;letter-spacing:0.03px;">Orthopedic Surgery</div><div class="t" style="left:512.5px;top:568.17px;font-size:10.2px;color:#000;-webkit-text-stroke:0.15px #000;word-spacing:-0.45px;letter-spacing:0.03px;">West Des Moines</div><div class="t" style="left:638.5px;top:568.17px;font-size:10.2px;color:#000;-webkit-text-stroke:0.15px #000;word-spacing:-0.45px;letter-spacing:0.03px;">IA</div><div class="t" style="left:-83.1px;width:200px;text-align:center;top:581.21px;font-size:10.5px;color:#111;letter-spacing:-0.9px;-webkit-text-stroke:0.1px #111;">5729</div><div class="t" style="left:91.5px;top:582.17px;font-size:10.2px;color:#000;-webkit-text-stroke:0.15px #000;word-spacing:-0.45px;letter-spacing:0.03px;">Lynn R Johnson</div><div class="t" style="left:275.5px;top:582.17px;font-size:10.2px;color:#000;-webkit-text-stroke:0.15px #000;word-spacing:-0.45px;letter-spacing:0.03px;">MD</div><div class="t" style="left:357.5px;top:582.17px;font-size:10.2px;color:#000;-webkit-text-stroke:0.15px #000;word-spacing:-0.45px;letter-spacing:0.03px;">Anesthesiology</div><div class="t" style="left:512.5px;top:582.17px;font-size:10.2px;color:#000;-webkit-text-stroke:0.15px #000;word-spacing:-0.45px;letter-spacing:0.03px;">Greenville</div><div class="t" style="left:638.5px;top:582.17px;font-size:10.2px;color:#000;-webkit-text-stroke:0.15px #000;word-spacing:-0.45px;letter-spacing:0.03px;">NC</div><div class="t" style="left:-83.1px;width:200px;text-align:center;top:595.21px;font-size:10.5px;color:#111;letter-spacing:-0.9px;-webkit-text-stroke:0.1px #111;">5730</div><div class="t" style="left:91.5px;top:596.17px;font-size:10.2px;color:#000;-webkit-text-stroke:0.15px #000;word-spacing:-0.45px;letter-spacing:0.03px;">Lynn R Kohan</div><div class="t" style="left:275.5px;top:596.17px;font-size:10.2px;color:#000;-webkit-text-stroke:0.15px #000;word-spacing:-0.45px;letter-spacing:0.03px;">MD</div><div class="t" style="left:357.5px;top:596.17px;font-size:10.2px;color:#000;-webkit-text-stroke:0.15px #000;word-spacing:-0.45px;letter-spacing:0.03px;">Pain Management</div><div class="t" style="left:512.5px;top:596.17px;font-size:10.2px;color:#000;-webkit-text-stroke:0.15px #000;word-spacing:-0.45px;letter-spacing:0.03px;">Charlottesville</div><div class="t" style="left:638.5px;top:596.17px;font-size:10.2px;color:#000;-webkit-text-stroke:0.15px #000;word-spacing:-0.45px;letter-spacing:0.03px;">VA</div><div class="t" style="left:-83.1px;width:200px;text-align:center;top:609.21px;font-size:10.5px;color:#111;letter-spacing:-0.9px;-webkit-text-stroke:0.1px #111;">5731</div><div class="t" style="left:91.5px;top:610.17px;font-size:10.2px;color:#000;-webkit-text-stroke:0.15px #000;word-spacing:-0.45px;letter-spacing:0.03px;">Lynn S Hedeman</div><div class="t" style="left:275.5px;top:610.17px;font-size:10.2px;color:#000;-webkit-text-stroke:0.15px #000;word-spacing:-0.45px;letter-spacing:0.03px;">M.D.</div><div class="t" style="left:357.5px;top:610.17px;font-size:10.2px;color:#000;-webkit-text-stroke:0.15px #000;word-spacing:-0.45px;letter-spacing:0.03px;">Neurosurgery</div><div class="t" style="left:512.5px;top:610.17px;font-size:10.2px;color:#000;-webkit-text-stroke:0.15px #000;word-spacing:-0.45px;letter-spacing:0.03px;">Grand Rapids</div><div class="t" style="left:638.5px;top:610.17px;font-size:10.2px;color:#000;-webkit-text-stroke:0.15px #000;word-spacing:-0.45px;letter-spacing:0.03px;">MI</div><div class="t" style="left:-83.1px;width:200px;text-align:center;top:623.21px;font-size:10.5px;color:#111;letter-spacing:-0.9px;-webkit-text-stroke:0.1px #111;">5732</div><div class="t" style="left:91.5px;top:624.17px;font-size:10.2px;color:#000;-webkit-text-stroke:0.15px #000;word-spacing:-0.45px;letter-spacing:0.03px;">Lyudmil L Todorov</div><div class="t" style="left:275.5px;top:624.17px;font-size:10.2px;color:#000;-webkit-text-stroke:0.15px #000;word-spacing:-0.45px;letter-spacing:0.03px;">MD</div><div class="t" style="left:357.5px;top:624.17px;font-size:10.2px;color:#000;-webkit-text-stroke:0.15px #000;word-spacing:-0.45px;letter-spacing:0.03px;">Anesthesiology</div><div class="t" style="left:512.5px;top:624.17px;font-size:10.2px;color:#000;-webkit-text-stroke:0.15px #000;word-spacing:-0.45px;letter-spacing:0.03px;">Pawtucket</div><div class="t" style="left:638.5px;top:624.17px;font-size:10.2px;color:#000;-webkit-text-stroke:0.15px #000;word-spacing:-0.45px;letter-spacing:0.03px;">RI</div><div class="t" style="left:-83.1px;width:200px;text-align:center;top:637.21px;font-size:10.5px;color:#111;letter-spacing:-0.9px;-webkit-text-stroke:0.1px #111;">5733</div><div class="t" style="left:91.5px;top:638.17px;font-size:10.2px;color:#000;-webkit-text-stroke:0.15px #000;word-spacing:-0.45px;letter-spacing:0.03px;">M F Sioufi</div><div class="t" style="left:275.5px;top:638.17px;font-size:10.2px;color:#000;-webkit-text-stroke:0.15px #000;word-spacing:-0.45px;letter-spacing:0.03px;">MD</div><div class="t" style="left:357.5px;top:638.17px;font-size:10.2px;color:#000;-webkit-text-stroke:0.15px #000;word-spacing:-0.45px;letter-spacing:0.03px;">Neurology</div><div class="t" style="left:512.5px;top:638.17px;font-size:10.2px;color:#000;-webkit-text-stroke:0.15px #000;word-spacing:-0.45px;letter-spacing:0.03px;">Ocoee</div><div class="t" style="left:638.5px;top:638.17px;font-size:10.2px;color:#000;-webkit-text-stroke:0.15px #000;word-spacing:-0.45px;letter-spacing:0.03px;">FL</div><div class="t" style="left:-83.1px;width:200px;text-align:center;top:651.21px;font-size:10.5px;color:#111;letter-spacing:-0.9px;-webkit-text-stroke:0.1px #111;">5734</div><div class="t" style="left:91.5px;top:652.17px;font-size:10.2px;color:#000;-webkit-text-stroke:0.15px #000;word-spacing:-0.45px;letter-spacing:0.03px;">M H Soumekh</div><div class="t" style="left:275.5px;top:652.17px;font-size:10.2px;color:#000;-webkit-text-stroke:0.15px #000;word-spacing:-0.45px;letter-spacing:0.03px;">M.D.</div><div class="t" style="left:357.5px;top:652.17px;font-size:10.2px;color:#000;-webkit-text-stroke:0.15px #000;word-spacing:-0.45px;letter-spacing:0.03px;">Neurosurgery</div><div class="t" style="left:512.5px;top:652.17px;font-size:10.2px;color:#000;-webkit-text-stroke:0.15px #000;word-spacing:-0.45px;letter-spacing:0.03px;">San Diego</div><div class="t" style="left:638.5px;top:652.17px;font-size:10.2px;color:#000;-webkit-text-stroke:0.15px #000;word-spacing:-0.45px;letter-spacing:0.03px;">CA</div><div class="t" style="left:-83.1px;width:200px;text-align:center;top:665.21px;font-size:10.5px;color:#111;letter-spacing:-0.9px;-webkit-text-stroke:0.1px #111;">5735</div><div class="t" style="left:91.5px;top:666.17px;font-size:10.2px;color:#000;-webkit-text-stroke:0.15px #000;word-spacing:-0.45px;letter-spacing:0.03px;">M. G Whitbeck</div><div class="t" style="left:275.5px;top:666.17px;font-size:10.2px;color:#000;-webkit-text-stroke:0.15px #000;word-spacing:-0.45px;letter-spacing:0.03px;">M.D.</div><div class="t" style="left:359.8px;top:666.17px;font-size:10.2px;color:#000;-webkit-text-stroke:0.15px #000;word-spacing:-0.45px;letter-spacing:0.03px;">Orthopedic Surgery</div><div class="t" style="left:512.5px;top:666.17px;font-size:10.2px;color:#000;-webkit-text-stroke:0.15px #000;word-spacing:-0.45px;letter-spacing:0.03px;">Rochester</div><div class="t" style="left:638.5px;top:666.17px;font-size:10.2px;color:#000;-webkit-text-stroke:0.15px #000;word-spacing:-0.45px;letter-spacing:0.03px;">NY</div><div class="t n" style="right:1279.25px;top:218.17px;font-size:10.2px;"><span class="o">1</span>.38E+09</div><div class="t n" style="right:645.25px;top:218.17px;font-size:10.2px;"><span class="o">1</span><span class="o">1</span>702</div><div class="t n" style="right:576.25px;top:218.17px;font-size:10.2px;">85%</div><div class="t n" style="right:480.25px;top:218.17px;font-size:10.2px;">347</div><div class="t n" style="right:407.55px;top:218.17px;font-size:10.2px;">$<span class="o">1</span>,<span class="o">1</span>00,695</div><div class="t n" style="right:345.55px;top:218.17px;font-size:10.2px;">$5,850,524</div><div class="t n" style="right:294.25px;top:218.17px;font-size:10.2px;">81</div><div class="t n" style="right:250.25px;top:218.17px;font-size:10.2px;"><span class="o">1</span>3,356</div><div class="t n" style="right:181.25px;top:218.17px;font-size:10.2px;">9<span class="o">1</span>8</div><div class="t n" style="right:100.25px;top:218.17px;font-size:10.2px;">992<span class="o">1</span>4</div><div class="t n" style="right:26.25px;top:218.17px;font-size:10.2px;">64635</div><div class="t n" style="right:1279.25px;top:232.17px;font-size:10.2px;"><span class="o">1</span>.86E+09</div><div class="t n" style="right:645.25px;top:232.17px;font-size:10.2px;">85251</div><div class="t n" style="right:576.25px;top:232.17px;font-size:10.2px;">86%</div><div class="t n" style="right:480.25px;top:232.17px;font-size:10.2px;">95</div><div class="t n" style="right:407.55px;top:232.17px;font-size:10.2px;">$368,220</div><div class="t n" style="right:345.55px;top:232.17px;font-size:10.2px;">$<span class="o">1</span>,660,333</div><div class="t n" style="right:294.25px;top:232.17px;font-size:10.2px;">54</div><div class="t n" style="right:250.25px;top:232.17px;font-size:10.2px;"><span class="o">1</span>,<span class="o">1</span><span class="o">1</span>1</div><div class="t n" style="right:181.25px;top:232.17px;font-size:10.2px;">484</div><div class="t n" style="right:100.25px;top:232.17px;font-size:10.2px;">22633</div><div class="t n" style="right:26.25px;top:232.17px;font-size:10.2px;">22551</div><div class="t n" style="right:1279.25px;top:246.17px;font-size:10.2px;"><span class="o">1</span>.8E+09</div><div class="t n" style="right:645.25px;top:246.17px;font-size:10.2px;">76054</div><div class="t n" style="right:576.25px;top:246.17px;font-size:10.2px;">9<span class="o">1</span>%</div><div class="t n" style="right:480.25px;top:246.17px;font-size:10.2px;">2447</div><div class="t n" style="right:407.55px;top:246.17px;font-size:10.2px;">$343,878</div><div class="t n" style="right:345.55px;top:246.17px;font-size:10.2px;">$<span class="o">1</span>,870,2<span class="o">1</span>8</div><div class="t n" style="right:294.25px;top:246.17px;font-size:10.2px;">70</div><div class="t n" style="right:250.25px;top:246.17px;font-size:10.2px;">4,652</div><div class="t n" style="right:181.25px;top:246.17px;font-size:10.2px;">434</div><div class="t n" style="right:100.25px;top:246.17px;font-size:10.2px;">992<span class="o">1</span>4</div><div class="t n" style="right:26.25px;top:246.17px;font-size:10.2px;">992<span class="o">1</span>3</div><div class="t n" style="right:1279.25px;top:260.17px;font-size:10.2px;"><span class="o">1</span>.55E+09</div><div class="t n" style="right:645.25px;top:260.17px;font-size:10.2px;">29425</div><div class="t n" style="right:576.25px;top:260.17px;font-size:10.2px;">74%</div><div class="t n" style="right:480.25px;top:260.17px;font-size:10.2px;"><span class="o">1</span>0084</div><div class="t n" style="right:407.55px;top:260.17px;font-size:10.2px;">$242,<span class="o">1</span>62</div><div class="t n" style="right:345.55px;top:260.17px;font-size:10.2px;">$<span class="o">1</span>,560,099</div><div class="t n" style="right:294.25px;top:260.17px;font-size:10.2px;">91</div><div class="t n" style="right:250.25px;top:260.17px;font-size:10.2px;"><span class="o">1</span>4,299</div><div class="t n" style="right:181.25px;top:260.17px;font-size:10.2px;">8<span class="o">1</span>8</div><div class="t n" style="right:100.25px;top:260.17px;font-size:10.2px;">70553</div><div class="t n" style="right:26.25px;top:260.17px;font-size:10.2px;">72<span class="o">1</span>48</div><div class="t n" style="right:1279.25px;top:274.17px;font-size:10.2px;"><span class="o">1</span>.76E+09</div><div class="t n" style="right:645.25px;top:274.17px;font-size:10.2px;"><span class="o">1</span>0940</div><div class="t n" style="right:576.25px;top:274.17px;font-size:10.2px;">66%</div><div class="t n" style="right:480.25px;top:274.17px;font-size:10.2px;"><span class="o">1</span>4828</div><div class="t n" style="right:407.55px;top:274.17px;font-size:10.2px;">$25<span class="o">1</span>,9<span class="o">1</span>6</div><div class="t n" style="right:345.55px;top:274.17px;font-size:10.2px;">$65<span class="o">1</span>,856</div><div class="t n" style="right:294.25px;top:274.17px;font-size:10.2px;">227</div><div class="t n" style="right:250.25px;top:274.17px;font-size:10.2px;">6,587</div><div class="t n" style="right:181.25px;top:274.17px;font-size:10.2px;">3,023</div><div class="t n" style="right:100.25px;top:274.17px;font-size:10.2px;">74<span class="o">1</span>77</div><div class="t n" style="right:26.25px;top:274.17px;font-size:10.2px;">70450</div><div class="t n" style="right:1279.25px;top:288.17px;font-size:10.2px;"><span class="o">1</span>.78E+09</div><div class="t n" style="right:645.25px;top:288.17px;font-size:10.2px;">63<span class="o">1</span><span class="o">1</span>0</div><div class="t n" style="right:576.25px;top:288.17px;font-size:10.2px;">63%</div><div class="t n" style="right:480.25px;top:288.17px;font-size:10.2px;"><span class="o">1</span>0<span class="o">1</span>09</div><div class="t n" style="right:407.55px;top:288.17px;font-size:10.2px;">$30<span class="o">1</span>,544</div><div class="t n" style="right:345.55px;top:288.17px;font-size:10.2px;">$<span class="o">1</span>,6<span class="o">1</span>8,447</div><div class="t n" style="right:294.25px;top:288.17px;font-size:10.2px;">59</div><div class="t n" style="right:250.25px;top:288.17px;font-size:10.2px;">682</div><div class="t n" style="right:181.25px;top:288.17px;font-size:10.2px;">245</div><div class="t n" style="right:100.25px;top:288.17px;font-size:10.2px;">63047</div><div class="t n" style="right:26.25px;top:288.17px;font-size:10.2px;">226<span class="o">1</span>4</div><div class="t n" style="right:1279.25px;top:302.17px;font-size:10.2px;"><span class="o">1</span>.37E+09</div><div class="t n" style="right:645.25px;top:302.17px;font-size:10.2px;">63<span class="o">1</span>41</div><div class="t n" style="right:576.25px;top:302.17px;font-size:10.2px;">55%</div><div class="t n" style="right:480.25px;top:302.17px;font-size:10.2px;"><span class="o">1</span>3552</div><div class="t n" style="right:407.55px;top:302.17px;font-size:10.2px;">$30<span class="o">1</span>,234</div><div class="t n" style="right:345.55px;top:302.17px;font-size:10.2px;">$2,086,534</div><div class="t n" style="right:294.25px;top:302.17px;font-size:10.2px;">71</div><div class="t n" style="right:250.25px;top:302.17px;font-size:10.2px;"><span class="o">1</span>,<span class="o">1</span>03</div><div class="t n" style="right:181.25px;top:302.17px;font-size:10.2px;">276</div><div class="t n" style="right:100.25px;top:302.17px;font-size:10.2px;">226<span class="o">1</span>2</div><div class="t n" style="right:26.25px;top:302.17px;font-size:10.2px;">63047</div><div class="t n" style="right:1279.25px;top:316.17px;font-size:10.2px;"><span class="o">1</span>.7<span class="o">1</span>E+09</div><div class="t n" style="right:645.25px;top:316.17px;font-size:10.2px;">95661</div><div class="t n" style="right:576.25px;top:316.17px;font-size:10.2px;">30%</div><div class="t n" style="right:480.25px;top:316.17px;font-size:10.2px;"><span class="o">1</span>9<span class="o">1</span>57</div><div class="t n" style="right:407.55px;top:316.17px;font-size:10.2px;">$79,<span class="o">1</span>60</div><div class="t n" style="right:345.55px;top:316.17px;font-size:10.2px;">$938,8<span class="o">1</span>8</div><div class="t n" style="right:294.25px;top:316.17px;font-size:10.2px;">65</div><div class="t n" style="right:250.25px;top:316.17px;font-size:10.2px;">394</div><div class="t n" style="right:181.25px;top:316.17px;font-size:10.2px;"><span class="o">1</span>62</div><div class="t n" style="right:100.25px;top:316.17px;font-size:10.2px;">226<span class="o">1</span>2</div><div class="t n" style="right:26.25px;top:316.17px;font-size:10.2px;">22840</div><div class="t n" style="right:1279.25px;top:330.17px;font-size:10.2px;"><span class="o">1</span>.94E+09</div><div class="t n" style="right:645.25px;top:330.17px;font-size:10.2px;">99508</div><div class="t n" style="right:576.25px;top:330.17px;font-size:10.2px;">77%</div><div class="t n" style="right:480.25px;top:330.17px;font-size:10.2px;">6448</div><div class="t n" style="right:407.55px;top:330.17px;font-size:10.2px;">$697,637</div><div class="t n" style="right:345.55px;top:330.17px;font-size:10.2px;">$5,48<span class="o">1</span>,3<span class="o">1</span>2</div><div class="t n" style="right:294.25px;top:330.17px;font-size:10.2px;"><span class="o">1</span><span class="o">1</span>7</div><div class="t n" style="right:250.25px;top:330.17px;font-size:10.2px;"><span class="o">1</span><span class="o">1</span>,042</div><div class="t n" style="right:181.25px;top:330.17px;font-size:10.2px;">535</div><div class="t n" style="right:100.25px;top:330.17px;font-size:10.2px;">992<span class="o">1</span>4</div><div class="t n" style="right:26.25px;top:330.17px;font-size:10.2px;">99205</div><div class="t n" style="right:1279.25px;top:344.17px;font-size:10.2px;"><span class="o">1</span>.07E+09</div><div class="t n" style="right:645.25px;top:344.17px;font-size:10.2px;">9<span class="o">1</span><span class="o">1</span>05</div><div class="t n" style="right:576.25px;top:344.17px;font-size:10.2px;">56%</div><div class="t n" style="right:480.25px;top:344.17px;font-size:10.2px;"><span class="o">1</span>7971</div><div class="t n" style="right:407.55px;top:344.17px;font-size:10.2px;">$83,953</div><div class="t n" style="right:345.55px;top:344.17px;font-size:10.2px;">$63<span class="o">1</span>,050</div><div class="t n" style="right:294.25px;top:344.17px;font-size:10.2px;">64</div><div class="t n" style="right:250.25px;top:344.17px;font-size:10.2px;">443</div><div class="t n" style="right:181.25px;top:344.17px;font-size:10.2px;">225</div><div class="t n" style="right:100.25px;top:344.17px;font-size:10.2px;">670</div><div class="t n" style="right:26.25px;top:344.17px;font-size:10.2px;"><span class="o">1</span>2<span class="o">1</span>4</div><div class="t n" style="right:1279.25px;top:358.17px;font-size:10.2px;"><span class="o">1</span>.95E+09</div><div class="t n" style="right:645.25px;top:358.17px;font-size:10.2px;">54401</div><div class="t n" style="right:576.25px;top:358.17px;font-size:10.2px;">64%</div><div class="t n" style="right:480.25px;top:358.17px;font-size:10.2px;">4902</div><div class="t n" style="right:407.55px;top:358.17px;font-size:10.2px;">$<span class="o">1</span>07,973</div><div class="t n" style="right:345.55px;top:358.17px;font-size:10.2px;">$607,772</div><div class="t n" style="right:294.25px;top:358.17px;font-size:10.2px;">58</div><div class="t n" style="right:250.25px;top:358.17px;font-size:10.2px;"><span class="o">1</span>,224</div><div class="t n" style="right:181.25px;top:358.17px;font-size:10.2px;">365</div><div class="t n" style="right:100.25px;top:358.17px;font-size:10.2px;">992<span class="o">1</span>3</div><div class="t n" style="right:26.25px;top:358.17px;font-size:10.2px;">64493</div><div class="t n" style="right:1279.25px;top:372.17px;font-size:10.2px;"><span class="o">1</span>.3<span class="o">1</span>E+09</div><div class="t n" style="right:645.25px;top:372.17px;font-size:10.2px;">38<span class="o">1</span>04</div><div class="t n" style="right:576.25px;top:372.17px;font-size:10.2px;">34%</div><div class="t n" style="right:480.25px;top:372.17px;font-size:10.2px;">28<span class="o">1</span>99</div><div class="t n" style="right:407.55px;top:372.17px;font-size:10.2px;">$24,444</div><div class="t n" style="right:345.55px;top:372.17px;font-size:10.2px;">$<span class="o">1</span>27,808</div><div class="t n" style="right:294.25px;top:372.17px;font-size:10.2px;">47</div><div class="t n" style="right:250.25px;top:372.17px;font-size:10.2px;">241</div><div class="t n" style="right:181.25px;top:372.17px;font-size:10.2px;"><span class="o">1</span>54</div><div class="t n" style="right:100.25px;top:372.17px;font-size:10.2px;">36620</div><div class="t n" style="right:26.25px;top:372.17px;font-size:10.2px;">62324</div><div class="t n" style="right:1279.25px;top:386.17px;font-size:10.2px;"><span class="o">1</span>.94E+09</div><div class="t n" style="right:645.25px;top:386.17px;font-size:10.2px;">37922-33</div><div class="t n" style="right:576.25px;top:386.17px;font-size:10.2px;">54%</div><div class="t n" style="right:480.25px;top:386.17px;font-size:10.2px;"><span class="o">1</span>4039</div><div class="t n" style="right:407.55px;top:386.17px;font-size:10.2px;">$220,501</div><div class="t n" style="right:345.55px;top:386.17px;font-size:10.2px;">$7<span class="o">1</span>6,922</div><div class="t n" style="right:294.25px;top:386.17px;font-size:10.2px;">74</div><div class="t n" style="right:250.25px;top:386.17px;font-size:10.2px;">2,034</div><div class="t n" style="right:181.25px;top:386.17px;font-size:10.2px;">448</div><div class="t n" style="right:100.25px;top:386.17px;font-size:10.2px;">992<span class="o">1</span>4</div><div class="t n" style="right:26.25px;top:386.17px;font-size:10.2px;">226<span class="o">1</span>2</div><div class="t n" style="right:1279.25px;top:400.17px;font-size:10.2px;"><span class="o">1</span>.92E+09</div><div class="t n" style="right:645.25px;top:400.17px;font-size:10.2px;">94305</div><div class="t n" style="right:576.25px;top:400.17px;font-size:10.2px;">60%</div><div class="t n" style="right:480.25px;top:400.17px;font-size:10.2px;"><span class="o">1</span>86<span class="o">1</span>3</div><div class="t n" style="right:407.55px;top:400.17px;font-size:10.2px;">$<span class="o">1</span><span class="o">1</span><span class="o">1</span>,764</div><div class="t n" style="right:345.55px;top:400.17px;font-size:10.2px;">$<span class="o">1</span>,060,670</div><div class="t n" style="right:294.25px;top:400.17px;font-size:10.2px;"><span class="o">1</span>59</div><div class="t n" style="right:250.25px;top:400.17px;font-size:10.2px;">2,309</div><div class="t n" style="right:181.25px;top:400.17px;font-size:10.2px;"><span class="o">1</span>,705</div><div class="t n" style="right:100.25px;top:400.17px;font-size:10.2px;">74<span class="o">1</span>77</div><div class="t n" style="right:26.25px;top:400.17px;font-size:10.2px;">74<span class="o">1</span>76</div><div class="t n" style="right:1279.25px;top:414.17px;font-size:10.2px;"><span class="o">1</span>.08E+09</div><div class="t n" style="right:645.25px;top:414.17px;font-size:10.2px;"><span class="o">1</span>2205</div><div class="t n" style="right:576.25px;top:414.17px;font-size:10.2px;">77%</div><div class="t n" style="right:480.25px;top:414.17px;font-size:10.2px;">769</div><div class="t n" style="right:407.55px;top:414.17px;font-size:10.2px;">$267,231</div><div class="t n" style="right:345.55px;top:414.17px;font-size:10.2px;">$<span class="o">1</span>,<span class="o">1</span>8<span class="o">1</span>,5<span class="o">1</span>2</div><div class="t n" style="right:294.25px;top:414.17px;font-size:10.2px;">50</div><div class="t n" style="right:250.25px;top:414.17px;font-size:10.2px;">4,<span class="o">1</span>70</div><div class="t n" style="right:181.25px;top:414.17px;font-size:10.2px;">638</div><div class="t n" style="right:100.25px;top:414.17px;font-size:10.2px;">62323</div><div class="t n" style="right:26.25px;top:414.17px;font-size:10.2px;">64493</div><div class="t n" style="right:1279.25px;top:428.17px;font-size:10.2px;"><span class="o">1</span>.04E+09</div><div class="t n" style="right:645.25px;top:428.17px;font-size:10.2px;">30328</div><div class="t n" style="right:576.25px;top:428.17px;font-size:10.2px;">67%</div><div class="t n" style="right:480.25px;top:428.17px;font-size:10.2px;"><span class="o">1</span><span class="o">1</span>579</div><div class="t n" style="right:407.55px;top:428.17px;font-size:10.2px;">$2<span class="o">1</span>5,7<span class="o">1</span>3</div><div class="t n" style="right:345.55px;top:428.17px;font-size:10.2px;">$<span class="o">1</span>,083,574</div><div class="t n" style="right:294.25px;top:428.17px;font-size:10.2px;">62</div><div class="t n" style="right:250.25px;top:428.17px;font-size:10.2px;">5,753</div><div class="t n" style="right:181.25px;top:428.17px;font-size:10.2px;">366</div><div class="t n" style="right:100.25px;top:428.17px;font-size:10.2px;">992<span class="o">1</span>3</div><div class="t n" style="right:26.25px;top:428.17px;font-size:10.2px;">80307</div><div class="t n" style="right:1279.25px;top:442.17px;font-size:10.2px;"><span class="o">1</span>.89E+09</div><div class="t n" style="right:645.25px;top:442.17px;font-size:10.2px;">63401</div><div class="t n" style="right:576.25px;top:442.17px;font-size:10.2px;">82%</div><div class="t n" style="right:480.25px;top:442.17px;font-size:10.2px;">43<span class="o">1</span>6</div><div class="t n" style="right:407.55px;top:442.17px;font-size:10.2px;">$364,253</div><div class="t n" style="right:345.55px;top:442.17px;font-size:10.2px;">$<span class="o">1</span>,437,221</div><div class="t n" style="right:294.25px;top:442.17px;font-size:10.2px;">48</div><div class="t n" style="right:250.25px;top:442.17px;font-size:10.2px;"><span class="o">1</span>5,660</div><div class="t n" style="right:181.25px;top:442.17px;font-size:10.2px;">601</div><div class="t n" style="right:100.25px;top:442.17px;font-size:10.2px;">992<span class="o">1</span>4</div><div class="t n" style="right:26.25px;top:442.17px;font-size:10.2px;">63650</div><div class="t n" style="right:1279.25px;top:456.17px;font-size:10.2px;"><span class="o">1</span>.32E+09</div><div class="t n" style="right:645.25px;top:456.17px;font-size:10.2px;">60005</div><div class="t n" style="right:576.25px;top:456.17px;font-size:10.2px;">8<span class="o">1</span>%</div><div class="t n" style="right:480.25px;top:456.17px;font-size:10.2px;">521</div><div class="t n" style="right:407.55px;top:456.17px;font-size:10.2px;">$433,230</div><div class="t n" style="right:345.55px;top:456.17px;font-size:10.2px;">$<span class="o">1</span>,638,8<span class="o">1</span>0</div><div class="t n" style="right:294.25px;top:456.17px;font-size:10.2px;">64</div><div class="t n" style="right:250.25px;top:456.17px;font-size:10.2px;"><span class="o">1</span>4,572</div><div class="t n" style="right:181.25px;top:456.17px;font-size:10.2px;">627</div><div class="t n" style="right:100.25px;top:456.17px;font-size:10.2px;">992<span class="o">1</span>4</div><div class="t n" style="right:26.25px;top:456.17px;font-size:10.2px;">62323</div><div class="t n" style="right:1279.25px;top:470.17px;font-size:10.2px;"><span class="o">1</span>.24E+09</div><div class="t n" style="right:645.25px;top:470.17px;font-size:10.2px;"><span class="o">1</span>0604</div><div class="t n" style="right:576.25px;top:470.17px;font-size:10.2px;">68%</div><div class="t n" style="right:480.25px;top:470.17px;font-size:10.2px;">4398</div><div class="t n" style="right:407.55px;top:470.17px;font-size:10.2px;">$<span class="o">1</span>79,928</div><div class="t n" style="right:345.55px;top:470.17px;font-size:10.2px;">$235,<span class="o">1</span>85</div><div class="t n" style="right:294.25px;top:470.17px;font-size:10.2px;">26</div><div class="t n" style="right:250.25px;top:470.17px;font-size:10.2px;"><span class="o">1</span>,663</div><div class="t n" style="right:181.25px;top:470.17px;font-size:10.2px;">240</div><div class="t n" style="right:100.25px;top:470.17px;font-size:10.2px;">992<span class="o">1</span>3</div><div class="t n" style="right:26.25px;top:470.17px;font-size:10.2px;">64483</div><div class="t n" style="right:1279.25px;top:484.17px;font-size:10.2px;"><span class="o">1</span>.<span class="o">1</span>9E+09</div><div class="t n" style="right:645.25px;top:484.17px;font-size:10.2px;">85281</div><div class="t n" style="right:576.25px;top:484.17px;font-size:10.2px;">62%</div><div class="t n" style="right:480.25px;top:484.17px;font-size:10.2px;"><span class="o">1</span>0588</div><div class="t n" style="right:407.55px;top:484.17px;font-size:10.2px;">$246,280</div><div class="t n" style="right:345.55px;top:484.17px;font-size:10.2px;">$<span class="o">1</span>,844,305</div><div class="t n" style="right:294.25px;top:484.17px;font-size:10.2px;">57</div><div class="t n" style="right:250.25px;top:484.17px;font-size:10.2px;"><span class="o">1</span>,<span class="o">1</span><span class="o">1</span>3</div><div class="t n" style="right:181.25px;top:484.17px;font-size:10.2px;">306</div><div class="t n" style="right:100.25px;top:484.17px;font-size:10.2px;">22633</div><div class="t n" style="right:26.25px;top:484.17px;font-size:10.2px;">99204</div><div class="t n" style="right:1279.25px;top:498.17px;font-size:10.2px;"><span class="o">1</span>.05E+09</div><div class="t n" style="right:645.25px;top:498.17px;font-size:10.2px;">93291</div><div class="t n" style="right:576.25px;top:498.17px;font-size:10.2px;">3<span class="o">1</span>%</div><div class="t n" style="right:480.25px;top:498.17px;font-size:10.2px;">3771</div><div class="t n" style="right:407.55px;top:498.17px;font-size:10.2px;">$<span class="o">1</span>54,954</div><div class="t n" style="right:345.55px;top:498.17px;font-size:10.2px;">$38<span class="o">1</span>,055</div><div class="t n" style="right:294.25px;top:498.17px;font-size:10.2px;">62</div><div class="t n" style="right:250.25px;top:498.17px;font-size:10.2px;">575</div><div class="t n" style="right:181.25px;top:498.17px;font-size:10.2px;">258</div><div class="t n" style="right:100.25px;top:498.17px;font-size:10.2px;">226<span class="o">1</span>4</div><div class="t n" style="right:26.25px;top:498.17px;font-size:10.2px;">22842</div><div class="t n" style="right:1279.25px;top:512.17px;font-size:10.2px;"><span class="o">1</span>.24E+09</div><div class="t n" style="right:645.25px;top:512.17px;font-size:10.2px;">452<span class="o">1</span>9</div><div class="t n" style="right:576.25px;top:512.17px;font-size:10.2px;">69%</div><div class="t n" style="right:480.25px;top:512.17px;font-size:10.2px;"><span class="o">1</span>0605</div><div class="t n" style="right:407.55px;top:512.17px;font-size:10.2px;">$<span class="o">1</span>04,253</div><div class="t n" style="right:345.55px;top:512.17px;font-size:10.2px;">$7<span class="o">1</span>4,455</div><div class="t n" style="right:294.25px;top:512.17px;font-size:10.2px;">65</div><div class="t n" style="right:250.25px;top:512.17px;font-size:10.2px;"><span class="o">1</span>,0<span class="o">1</span>3</div><div class="t n" style="right:181.25px;top:512.17px;font-size:10.2px;">498</div><div class="t n" style="right:100.25px;top:512.17px;font-size:10.2px;">62323</div><div class="t n" style="right:26.25px;top:512.17px;font-size:10.2px;">64483</div><div class="t n" style="right:1279.25px;top:526.17px;font-size:10.2px;"><span class="o">1</span>.87E+09</div><div class="t n" style="right:645.25px;top:526.17px;font-size:10.2px;">53<span class="o">1</span>88</div><div class="t n" style="right:576.25px;top:526.17px;font-size:10.2px;">49%</div><div class="t n" style="right:480.25px;top:526.17px;font-size:10.2px;">2555</div><div class="t n" style="right:407.55px;top:526.17px;font-size:10.2px;">$<span class="o">1</span>39,303</div><div class="t n" style="right:345.55px;top:526.17px;font-size:10.2px;">$<span class="o">1</span>,084,696</div><div class="t n" style="right:294.25px;top:526.17px;font-size:10.2px;">54</div><div class="t n" style="right:250.25px;top:526.17px;font-size:10.2px;">523</div><div class="t n" style="right:181.25px;top:526.17px;font-size:10.2px;">208</div><div class="t n" style="right:100.25px;top:526.17px;font-size:10.2px;">63047</div><div class="t n" style="right:26.25px;top:526.17px;font-size:10.2px;">63048</div><div class="t n" style="right:1279.25px;top:540.17px;font-size:10.2px;"><span class="o">1</span>.7<span class="o">1</span>E+09</div><div class="t n" style="right:645.25px;top:540.17px;font-size:10.2px;">28374</div><div class="t n" style="right:576.25px;top:540.17px;font-size:10.2px;">86%</div><div class="t n" style="right:480.25px;top:540.17px;font-size:10.2px;">2994</div><div class="t n" style="right:407.55px;top:540.17px;font-size:10.2px;">$23<span class="o">1</span>,<span class="o">1</span>34</div><div class="t n" style="right:345.55px;top:540.17px;font-size:10.2px;">$887,258</div><div class="t n" style="right:294.25px;top:540.17px;font-size:10.2px;">46</div><div class="t n" style="right:250.25px;top:540.17px;font-size:10.2px;">8,643</div><div class="t n" style="right:181.25px;top:540.17px;font-size:10.2px;">545</div><div class="t n" style="right:100.25px;top:540.17px;font-size:10.2px;">62323</div><div class="t n" style="right:26.25px;top:540.17px;font-size:10.2px;">27096</div><div class="t n" style="right:1279.25px;top:554.17px;font-size:10.2px;"><span class="o">1</span>.2<span class="o">1</span>E+09</div><div class="t n" style="right:645.25px;top:554.17px;font-size:10.2px;">84604</div><div class="t n" style="right:576.25px;top:554.17px;font-size:10.2px;">43%</div><div class="t n" style="right:480.25px;top:554.17px;font-size:10.2px;">30<span class="o">1</span>1</div><div class="t n" style="right:407.55px;top:554.17px;font-size:10.2px;">$22<span class="o">1</span>,840</div><div class="t n" style="right:345.55px;top:554.17px;font-size:10.2px;">$639,<span class="o">1</span>99</div><div class="t n" style="right:294.25px;top:554.17px;font-size:10.2px;">43</div><div class="t n" style="right:250.25px;top:554.17px;font-size:10.2px;">578</div><div class="t n" style="right:181.25px;top:554.17px;font-size:10.2px;">231</div><div class="t n" style="right:100.25px;top:554.17px;font-size:10.2px;">63042</div><div class="t n" style="right:26.25px;top:554.17px;font-size:10.2px;">22551</div><div class="t n" style="right:1279.25px;top:568.17px;font-size:10.2px;"><span class="o">1</span>.62E+09</div><div class="t n" style="right:645.25px;top:568.17px;font-size:10.2px;">50266</div><div class="t n" style="right:576.25px;top:568.17px;font-size:10.2px;">72%</div><div class="t n" style="right:480.25px;top:568.17px;font-size:10.2px;">6<span class="o">1</span><span class="o">1</span>1</div><div class="t n" style="right:407.55px;top:568.17px;font-size:10.2px;">$286,805</div><div class="t n" style="right:345.55px;top:568.17px;font-size:10.2px;">$<span class="o">1</span>,<span class="o">1</span>36,<span class="o">1</span><span class="o">1</span>4</div><div class="t n" style="right:294.25px;top:568.17px;font-size:10.2px;">61</div><div class="t n" style="right:250.25px;top:568.17px;font-size:10.2px;">4,057</div><div class="t n" style="right:181.25px;top:568.17px;font-size:10.2px;">484</div><div class="t n" style="right:100.25px;top:568.17px;font-size:10.2px;">63047</div><div class="t n" style="right:26.25px;top:568.17px;font-size:10.2px;">226<span class="o">1</span>2</div><div class="t n" style="right:1279.25px;top:582.17px;font-size:10.2px;"><span class="o">1</span>.5<span class="o">1</span>E+09</div><div class="t n" style="right:645.25px;top:582.17px;font-size:10.2px;">27834</div><div class="t n" style="right:576.25px;top:582.17px;font-size:10.2px;">52%</div><div class="t n" style="right:480.25px;top:582.17px;font-size:10.2px;">20<span class="o">1</span><span class="o">1</span>9</div><div class="t n" style="right:407.55px;top:582.17px;font-size:10.2px;">$<span class="o">1</span>23,442</div><div class="t n" style="right:345.55px;top:582.17px;font-size:10.2px;">$<span class="o">1</span>,53<span class="o">1</span>,225</div><div class="t n" style="right:294.25px;top:582.17px;font-size:10.2px;"><span class="o">1</span><span class="o">1</span>0</div><div class="t n" style="right:250.25px;top:582.17px;font-size:10.2px;"><span class="o">1</span>,342</div><div class="t n" style="right:181.25px;top:582.17px;font-size:10.2px;">765</div><div class="t n" style="right:100.25px;top:582.17px;font-size:10.2px;">62323</div><div class="t n" style="right:26.25px;top:582.17px;font-size:10.2px;">992<span class="o">1</span>3</div><div class="t n" style="right:1279.25px;top:596.17px;font-size:10.2px;"><span class="o">1</span>.02E+09</div><div class="t n" style="right:645.25px;top:596.17px;font-size:10.2px;">22903</div><div class="t n" style="right:576.25px;top:596.17px;font-size:10.2px;">48%</div><div class="t n" style="right:480.25px;top:596.17px;font-size:10.2px;"><span class="o">1</span>884</div><div class="t n" style="right:407.55px;top:596.17px;font-size:10.2px;">$6<span class="o">1</span>,604</div><div class="t n" style="right:345.55px;top:596.17px;font-size:10.2px;">$300,<span class="o">1</span>86</div><div class="t n" style="right:294.25px;top:596.17px;font-size:10.2px;">47</div><div class="t n" style="right:250.25px;top:596.17px;font-size:10.2px;">745</div><div class="t n" style="right:181.25px;top:596.17px;font-size:10.2px;">495</div><div class="t n" style="right:100.25px;top:596.17px;font-size:10.2px;">992<span class="o">1</span>4</div><div class="t n" style="right:26.25px;top:596.17px;font-size:10.2px;"><span class="o">1</span>996</div><div class="t n" style="right:1279.25px;top:610.17px;font-size:10.2px;"><span class="o">1</span>.5E+09</div><div class="t n" style="right:645.25px;top:610.17px;font-size:10.2px;">49503</div><div class="t n" style="right:576.25px;top:610.17px;font-size:10.2px;">55%</div><div class="t n" style="right:480.25px;top:610.17px;font-size:10.2px;"><span class="o">1</span>905</div><div class="t n" style="right:407.55px;top:610.17px;font-size:10.2px;">$<span class="o">1</span><span class="o">1</span>7,081</div><div class="t n" style="right:345.55px;top:610.17px;font-size:10.2px;">$56<span class="o">1</span>,797</div><div class="t n" style="right:294.25px;top:610.17px;font-size:10.2px;">23</div><div class="t n" style="right:250.25px;top:610.17px;font-size:10.2px;">269</div><div class="t n" style="right:181.25px;top:610.17px;font-size:10.2px;">93</div><div class="t n" style="right:100.25px;top:610.17px;font-size:10.2px;">226<span class="o">1</span>2</div><div class="t n" style="right:26.25px;top:610.17px;font-size:10.2px;">63047</div><div class="t n" style="right:1279.25px;top:624.17px;font-size:10.2px;"><span class="o">1</span>.48E+09</div><div class="t n" style="right:645.25px;top:624.17px;font-size:10.2px;">2860</div><div class="t n" style="right:576.25px;top:624.17px;font-size:10.2px;">6<span class="o">1</span>%</div><div class="t n" style="right:480.25px;top:624.17px;font-size:10.2px;"><span class="o">1</span>5326</div><div class="t n" style="right:407.55px;top:624.17px;font-size:10.2px;">$94,499</div><div class="t n" style="right:345.55px;top:624.17px;font-size:10.2px;">$799,7<span class="o">1</span>9</div><div class="t n" style="right:294.25px;top:624.17px;font-size:10.2px;">81</div><div class="t n" style="right:250.25px;top:624.17px;font-size:10.2px;">833</div><div class="t n" style="right:181.25px;top:624.17px;font-size:10.2px;">380</div><div class="t n" style="right:100.25px;top:624.17px;font-size:10.2px;">62323</div><div class="t n" style="right:26.25px;top:624.17px;font-size:10.2px;">992<span class="o">1</span>4</div><div class="t n" style="right:1279.25px;top:638.17px;font-size:10.2px;"><span class="o">1</span>.43E+09</div><div class="t n" style="right:645.25px;top:638.17px;font-size:10.2px;">34761</div><div class="t n" style="right:576.25px;top:638.17px;font-size:10.2px;">67%</div><div class="t n" style="right:480.25px;top:638.17px;font-size:10.2px;">6686</div><div class="t n" style="right:407.55px;top:638.17px;font-size:10.2px;">$309,2<span class="o">1</span>5</div><div class="t n" style="right:345.55px;top:638.17px;font-size:10.2px;">$<span class="o">1</span>,049,088</div><div class="t n" style="right:294.25px;top:638.17px;font-size:10.2px;">37</div><div class="t n" style="right:250.25px;top:638.17px;font-size:10.2px;"><span class="o">1</span>,829</div><div class="t n" style="right:181.25px;top:638.17px;font-size:10.2px;">838</div><div class="t n" style="right:100.25px;top:638.17px;font-size:10.2px;">95951</div><div class="t n" style="right:26.25px;top:638.17px;font-size:10.2px;">99222</div><div class="t n" style="right:1279.25px;top:652.17px;font-size:10.2px;"><span class="o">1</span>.27E+09</div><div class="t n" style="right:645.25px;top:652.17px;font-size:10.2px;">92<span class="o">1</span>23</div><div class="t n" style="right:576.25px;top:652.17px;font-size:10.2px;">69%</div><div class="t n" style="right:480.25px;top:652.17px;font-size:10.2px;">830</div><div class="t n" style="right:407.55px;top:652.17px;font-size:10.2px;">$442,670</div><div class="t n" style="right:345.55px;top:652.17px;font-size:10.2px;">$<span class="o">1</span>,850,7<span class="o">1</span>1</div><div class="t n" style="right:294.25px;top:652.17px;font-size:10.2px;">88</div><div class="t n" style="right:250.25px;top:652.17px;font-size:10.2px;"><span class="o">1</span>,4<span class="o">1</span>7</div><div class="t n" style="right:181.25px;top:652.17px;font-size:10.2px;">335</div><div class="t n" style="right:100.25px;top:652.17px;font-size:10.2px;">226<span class="o">1</span>4</div><div class="t n" style="right:26.25px;top:652.17px;font-size:10.2px;">63047</div><div class="t n" style="right:1279.25px;top:666.17px;font-size:10.2px;"><span class="o">1</span>.32E+09</div><div class="t n" style="right:645.25px;top:666.17px;font-size:10.2px;"><span class="o">1</span>4609</div><div class="t n" style="right:576.25px;top:666.17px;font-size:10.2px;">50%</div><div class="t n" style="right:480.25px;top:666.17px;font-size:10.2px;"><span class="o">1</span>52<span class="o">1</span>4</div><div class="t n" style="right:407.55px;top:666.17px;font-size:10.2px;">$<span class="o">1</span>70,628</div><div class="t n" style="right:345.55px;top:666.17px;font-size:10.2px;">$564,068</div><div class="t n" style="right:294.25px;top:666.17px;font-size:10.2px;">37</div><div class="t n" style="right:250.25px;top:666.17px;font-size:10.2px;">385</div><div class="t n" style="right:181.25px;top:666.17px;font-size:10.2px;"><span class="o">1</span>21</div><div class="t n" style="right:100.25px;top:666.17px;font-size:10.2px;">22633</div><div class="t n" style="right:26.25px;top:666.17px;font-size:10.2px;">226<span class="o">1</span>4</div><div class="r" style="left:1344px;top:203px;width:22px;height:475px;background:#E6E6E6;"></div><div class="r" style="left:1344px;top:221px;width:19px;height:441px;background:#D9D9D9;"></div><div class="r" style="left:1344px;top:216px;width:1px;height:462px;background:#ABABAB;"></div><div class="r" style="left:1348px;top:205px;width:15px;height:15px;background:#fff;border:1px solid #C6C6C6;box-sizing:border-box"></div><svg class="s" style="left:1351px;top:210px;" width="9" height="5" viewBox="0 0 9 5"><path d="M0.5 4.5 L4.5 0.5 L8.5 4.5 Z" fill="#777"/></svg><div class="r" style="left:1348px;top:464px;width:15px;height:17px;background:#fff;border:1px solid #ABABAB;box-sizing:border-box"></div><div class="r" style="left:1348px;top:663px;width:15px;height:15px;background:#fff;border:1px solid #C6C6C6;box-sizing:border-box"></div><svg class="s" style="left:1351px;top:668px;" width="9" height="5" viewBox="0 0 9 5"><path d="M0.5 0.5 L8.5 0.5 L4.5 4.5 Z" fill="#777"/></svg><div class="r" style="left:0px;top:677px;width:33px;height:1px;background:#ABABAB;"></div><div class="r" style="left:0px;top:678px;width:1366px;height:28px;background:#E6E6E6;"></div><div class="r" style="left:0px;top:706px;width:1366px;height:1px;background:#C6C6C6;"></div><div class="r" style="left:0px;top:678px;width:1344px;height:1px;background:#A6A6A6;"></div><svg class="s" style="left:26px;top:687px;" width="6" height="9" viewBox="0 0 6 9"><path d="M5.5 0.5 V8.5 L0.5 4.5 Z" fill="#BDBDBD"/></svg><svg class="s" style="left:55px;top:687px;" width="6" height="9" viewBox="0 0 6 9"><path d="M0.5 0.5 V8.5 L5.5 4.5 Z" fill="#BDBDBD"/></svg><div class="r" style="left:100px;top:678px;width:149px;height:25px;background:#fff;border:1px solid #C6C6C6;border-top:none;box-sizing:border-box"></div><div class="r" style="left:100px;top:701px;width:149px;height:2px;background:#217346;"></div><div class="t" style="left:112px;top:686.02px;font-size:12.5px;color:#217346;font-weight:bold;letter-spacing:-0.1px;letter-spacing:-0.188px;">Surgeons_CPT codes</div><svg class="s" style="left:282px;top:684px;" width="16" height="16" viewBox="0 0 16 16"><circle cx="8" cy="8" r="7" fill="none" stroke="#7a7a7a" stroke-width="1.1"/><path d="M8 4 V12 M4 8 H12" stroke="#666" stroke-width="1.6"/></svg><div class="r" style="left:819px;top:686px;width:2px;height:2px;background:#A0A0A0;"></div><div class="r" style="left:819px;top:690px;width:2px;height:2px;background:#A0A0A0;"></div><div class="r" style="left:819px;top:694px;width:2px;height:2px;background:#A0A0A0;"></div><div class="r" style="left:836px;top:685px;width:508px;height:15px;background:#D6D6D6;"></div><div class="r" style="left:836px;top:685px;width:15px;height:15px;background:#fff;border:1px solid #ABABAB;box-sizing:border-box"></div><svg class="s" style="left:840px;top:688px;" width="6" height="9" viewBox="0 0 6 9"><path d="M5 0.5 V8.5 L1 4.5 Z" fill="#666"/></svg><div class="r" style="left:851px;top:685px;width:364px;height:15px;background:#fff;border:1px solid #ABABAB;box-sizing:border-box"></div><div class="r" style="left:1330px;top:685px;width:15px;height:15px;background:#fff;border:1px solid #ABABAB;box-sizing:border-box"></div><svg class="s" style="left:1335px;top:688px;" width="6" height="9" viewBox="0 0 6 9"><path d="M1 0.5 V8.5 L5 4.5 Z" fill="#666"/></svg><div class="r" style="left:0px;top:707px;width:1366px;height:21px;background:#F3F3F3;"></div><div class="t" style="left:7.5px;top:712.54px;font-size:12px;color:#444;letter-spacing:-0.747px;">Ready</div><div class="r" style="left:1066px;top:707px;width:40px;height:21px;background:#C6C6C6;"></div><svg class="s" style="left:1078px;top:709px;" width="16" height="16" viewBox="0 0 16 16"><g fill="none" stroke="#707070" stroke-width="1"><rect x="1.5" y="1.5" width="12" height="12"/><line x1="5.5" y1="1.5" x2="5.5" y2="13.5"/><line x1="9.5" y1="1.5" x2="9.5" y2="13.5"/><line x1="1.5" y1="5.5" x2="13.5" y2="5.5"/><line x1="1.5" y1="9.5" x2="13.5" y2="9.5"/></g></svg><svg class="s" style="left:1118px;top:709px;" width="16" height="16" viewBox="0 0 16 16"><g fill="none" stroke="#707070" stroke-width="1"><rect x="1.5" y="1.5" width="13" height="12"/><rect x="4.5" y="3.5" width="7" height="8"/><line x1="6" y1="5.5" x2="10" y2="5.5"/><line x1="6" y1="7.5" x2="10" y2="7.5"/><line x1="6" y1="9.5" x2="10" y2="9.5"/></g></svg><svg class="s" style="left:1158px;top:709px;" width="16" height="16" viewBox="0 0 16 16"><g fill="none" stroke="#707070" stroke-width="1"><rect x="1.5" y="1.5" width="13" height="12"/><path d="M1.5 8.5 H8.5 V1.5 M4.5 1.5 V8.5"/></g></svg><div class="r" style="left:1192px;top:717px;width:8px;height:1px;background:#555;"></div><div class="r" style="left:1205px;top:717px;width:100px;height:1px;background:#9a9a9a;"></div><div class="r" style="left:1255px;top:714px;width:1px;height:7px;background:#9a9a9a;"></div><div class="r" style="left:1237px;top:712px;width:5px;height:11px;background:#606060;"></div><div class="r" style="left:1309px;top:717px;width:9px;height:1px;background:#555;"></div><div class="r" style="left:1313px;top:713px;width:1px;height:9px;background:#555;"></div><div class="t" style="left:1331px;top:711.84px;font-size:12px;color:#444;letter-spacing:-1.016px;">70%</div><div class="r" style="left:0px;top:728px;width:1366px;height:40px;background:#4E3C34;"></div><div class="r" style="left:358px;top:728px;width:68px;height:40px;background:#B6A49C;"></div><div class="r" style="left:426px;top:728px;width:514px;height:40px;background:linear-gradient(90deg,#8b796c 0%,#8f7e72 30%,#8c7b6f 60%,#8f7f74 100%)"></div><svg class="s" style="left:600px;top:728px;" width="180" height="40" viewBox="0 0 180 40"><path d="M14.3 0 H69.4 L71.4 40 H18 Z" fill="#605d5c"/><path d="M107.5 0 H164.6 L163.7 40 H111 Z" fill="#5f5c5b"/></svg><div class="r" style="left:940px;top:728px;width:127px;height:40px;background:#B5A39B;"></div><svg class="s" style="left:0px;top:728px;" width="110" height="40" viewBox="0 0 110 40"><g fill="#fff">
<path d="M11.7 9.3 L22.9 8.1 V19.1 H11.7 Z"/><path d="M24 7.9 L38.2 6.8 V19.1 H24 Z"/>
<path d="M11.7 20.1 H22.9 V29.6 L11.7 28.6 Z"/><path d="M24 20.1 H38.2 V32.2 L24 29.7 Z"/></g>
<path d="M65 8.5 H76 L78 10.5 H96 V33.8 H65 Z" fill="#E2BE62"/>
<rect x="68" y="7.5" width="12" height="3" fill="#fff"/><rect x="68.5" y="7.8" width="3" height="2" fill="#16B316"/>
<rect x="76" y="9.5" width="11" height="3" fill="#fff"/><rect x="76.5" y="9.8" width="3" height="2" fill="#D03A2A"/>
<rect x="84" y="11.5" width="10" height="3" fill="#fff"/><rect x="84.5" y="11.8" width="3" height="2" fill="#2B8FE6"/>
<path d="M65.5 13.5 H96.5 V33.8 H65.5 Z" fill="#F6DE8C" stroke="#E3C46A" stroke-width="1"/>
<path d="M69 35.4 V25.5 Q69 23 71.5 23 H90.5 Q93 23 93 25.5 V35.4 H86.5 V28.5 H75.5 V35.4 Z" fill="#8FD0F0" stroke="#3C93D1" stroke-width="1"/>
</svg><svg class="s" style="left:127px;top:731px" width="34" height="34" viewBox="0 0 34 34">
<defs><linearGradient id="ieg" x1="0" y1="0" x2="0" y2="1"><stop offset="0" stop-color="#7FD8F8"/><stop offset="0.6" stop-color="#34A9EA"/><stop offset="1" stop-color="#1C7FD6"/></linearGradient>
<mask id="iem"><rect width="34" height="34" fill="#fff"/><path d="M9.5 17 Q10 9.8 17.5 9.8 Q25 9.8 25.5 17 Z" fill="#000"/><path d="M21 21 H32 V25 Q27 27 21 25 Z" fill="#000"/><path d="M9.5 21 Q11 26 17 26 Q20 26 21.5 24.5 L21.5 21 Z" fill="#000"/></mask></defs>
<circle cx="17" cy="17.5" r="14" fill="url(#ieg)" mask="url(#iem)"/>
<path d="M3 30.5 Q-1 25 9 13 Q20 1 29 1.5 Q33 2.5 30.5 8" fill="none" stroke="#F5BB10" stroke-width="2.6"/>
<path d="M3 30.5 Q5 32 9 30" fill="none" stroke="#E8A800" stroke-width="2"/>
</svg><svg class="s" style="left:190px;top:733px;" width="30" height="30" viewBox="0 0 30 30"><rect width="30" height="30" fill="#008A00"/>
<path d="M4 10.7 L25 7 V25.6 L21 26.8 L4 23.6 Z" fill="#fff"/>
<path d="M7.5 10 Q7.5 3 11.5 3 Q15 3 15.5 9 M14 5 Q17 3 19 8.5" fill="none" stroke="#fff" stroke-width="1.4"/>
<g fill="#008A00"><path d="M7 12.3 H11.7 V16.9 H7 Z"/><path d="M12.7 12 H17.2 V16.9 H12.7 Z"/><path d="M7 17.9 H11.7 V22.3 L7 21.8 Z"/><path d="M12.7 17.9 H17.2 V22.8 L12.7 22.4 Z"/></g>
</svg><div class="r" style="left:238px;top:729px;width:58px;height:38px;background:#6F5F57;border:1px solid #8C7C74;box-sizing:border-box"></div><svg class="s" style="left:252px;top:733px;" width="30" height="30" viewBox="0 0 30 30"><circle cx="15" cy="15" r="15" fill="#DB4437"/>
<path d="M15 15 L28 7.5 A15 15 0 0 1 15 30 Z" fill="#F4C20D"/>
<path d="M15 15 L15 30 A15 15 0 0 1 2 7.5 Z" fill="#0F9D58"/>
<path d="M15 15 L2 7.5 A15 15 0 0 1 28 7.5 Z" fill="#DB4437"/>
<circle cx="15" cy="15" r="7" fill="#fff"/><circle cx="15" cy="15" r="5.5" fill="#4285F4"/></svg><div class="r" style="left:300px;top:729px;width:58px;height:38px;background:#CABEB9;border:1px solid #E6DEDA;box-sizing:border-box"></div><svg class="s" style="left:312px;top:734px;" width="34" height="28" viewBox="0 0 34 28"><rect x="8" y="0" width="25" height="28" rx="1.5" fill="#21A366"/><rect x="20" y="0" width="13" height="7" fill="#33C481"/><rect x="8" y="14" width="25" height="7" fill="#107C41"/><rect x="8" y="21" width="25" height="7" fill="#185C37"/>
<rect x="0" y="6" width="17" height="16" rx="1" fill="#107C41"/><path d="M4.5 10 L12.5 18 M12.5 10 L4.5 18" stroke="#fff" stroke-width="2.4"/></svg><svg class="s" style="left:1151px;top:739px;" width="31" height="19" viewBox="0 0 31 19"><rect x="1" y="1" width="29" height="17" rx="1.5" fill="none" stroke="#fff" stroke-width="1.6"/><g fill="#fff"><rect x="4" y="4" width="3" height="2.5"/><rect x="8.5" y="4" width="3" height="2.5"/><rect x="13" y="4" width="3" height="2.5"/><rect x="17.5" y="4" width="3" height="2.5"/><rect x="22" y="4" width="4" height="2.5"/><rect x="4" y="8" width="3" height="2.5"/><rect x="8.5" y="8" width="3" height="2.5"/><rect x="13" y="8" width="3" height="2.5"/><rect x="17.5" y="8" width="3" height="2.5"/><rect x="22" y="8" width="4" height="2.5"/><rect x="4" y="12" width="3" height="2.5"/><rect x="8.5" y="12" width="13" height="2.5"/><rect x="22" y="12" width="4" height="2.5"/></g></svg><svg class="s" style="left:1195px;top:746px;" width="9" height="6" viewBox="0 0 9 6"><path d="M0.5 5.5 L4.5 1 L8.5 5.5 Z" fill="#E8E8E8"/></svg><svg class="s" style="left:1222px;top:741px;" width="10" height="16" viewBox="0 0 10 16"><rect x="1" y="2.5" width="8" height="13" rx="1" fill="none" stroke="#fff" stroke-width="1.3"/><rect x="3" y="0.5" width="4" height="2" fill="#fff"/><rect x="2.5" y="11" width="5" height="3.5" fill="#fff"/></svg><svg class="s" style="left:1240px;top:742px;" width="16" height="13" viewBox="0 0 16 13"><g fill="#fff"><rect x="0" y="10.5" width="2.2" height="2"/><rect x="3.5" y="8.5" width="2.2" height="4"/><rect x="7" y="6" width="2.2" height="6.5"/><rect x="10.5" y="3" width="2.2" height="9.5"/><rect x="13.8" y="0" width="2.2" height="12.5"/></g></svg><svg class="s" style="left:1264px;top:741px;" width="16" height="16" viewBox="0 0 16 16"><path d="M1 5 H4 L8.5 1 V15 L4 11 H1 Z" fill="#fff" stroke="#fff" stroke-width="1.1"/><path d="M10.5 5.5 Q12 8 10.5 10.5 M12.5 3.5 Q15.5 8 12.5 12.5" fill="none" stroke="#fff" stroke-width="1.2"/></svg><div class="t" style="left:1299.7px;top:734.84px;font-size:12px;color:#fff;letter-spacing:-0.468px;">12:34 PM</div><div class="t" style="left:1297.2px;top:751.84px;font-size:12px;color:#fff;letter-spacing:-0.099px;">5/17/2022</div>
</body></html>
